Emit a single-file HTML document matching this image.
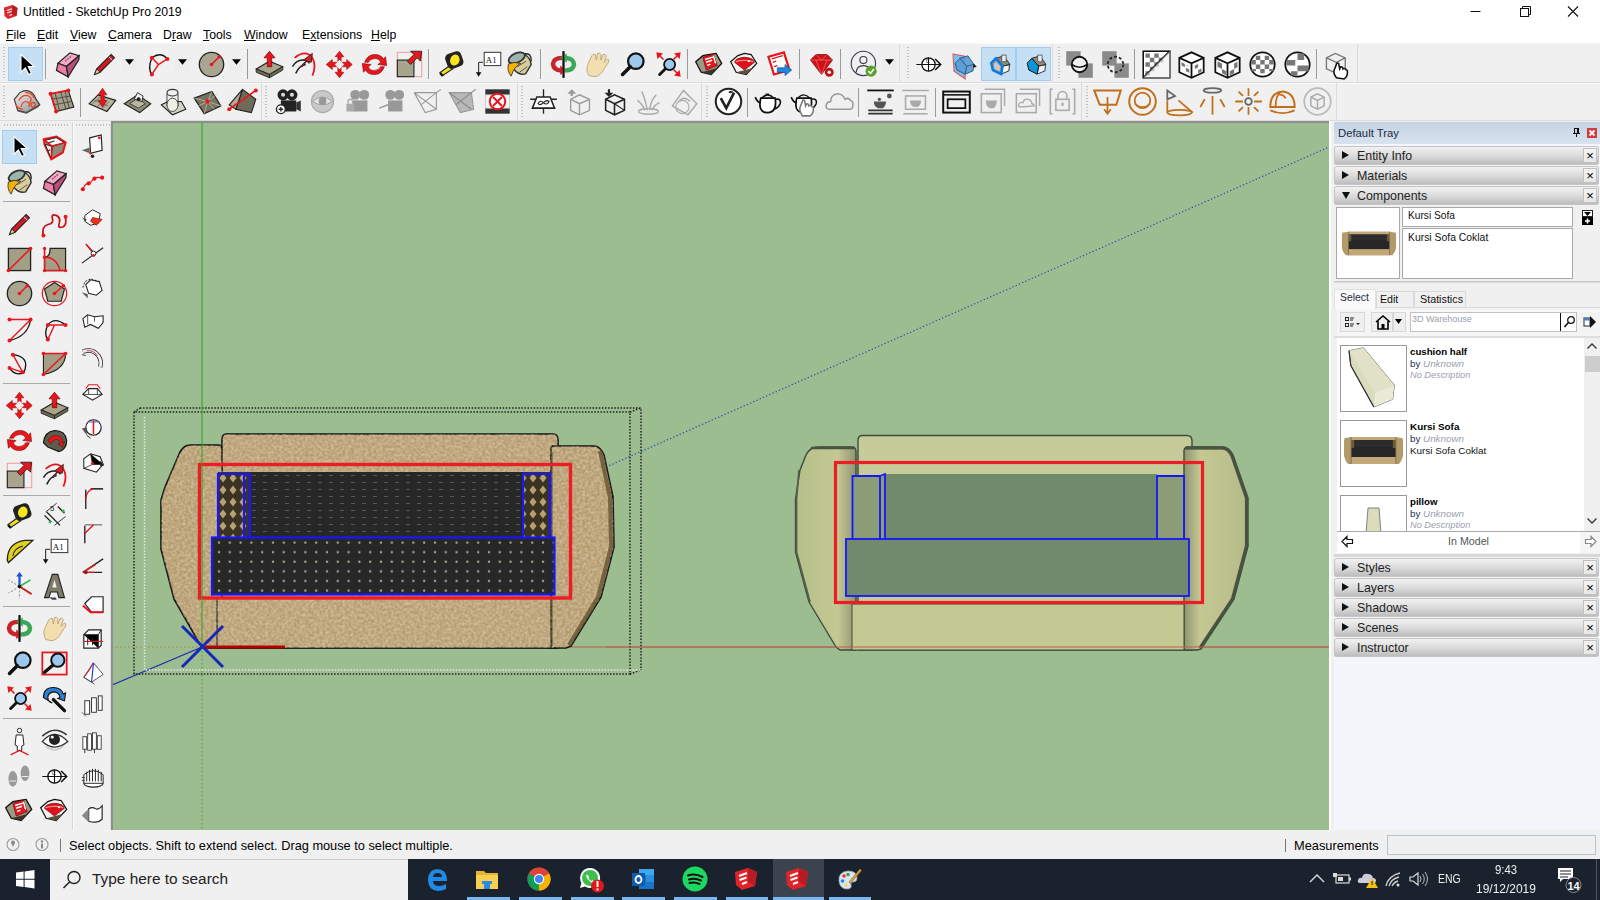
<!DOCTYPE html>
<html><head><meta charset="utf-8">
<style>
*{margin:0;padding:0;box-sizing:border-box}
html,body{width:1600px;height:900px;overflow:hidden;background:#f0f0f0;font-family:"Liberation Sans",sans-serif;position:relative}
.a{position:absolute}
.t{position:absolute;white-space:nowrap;line-height:1}
#title{left:0;top:0;width:1600px;height:43px;background:#fff}
#tb{left:0;top:43px;width:1600px;height:79px;background:#f0f0f0}
#vp{left:113px;top:123px;width:1216px;height:707px;background:#9bbd8f;overflow:hidden}
#status{left:0;top:830px;width:1600px;height:29px;background:#f0f0f0}
#task{left:0;top:859px;width:1600px;height:41px;background:#1a232d}
#tray{left:1334px;top:122px;width:266px;height:710px;background:#f2f5fa}
.hdr{position:absolute;left:1334px;width:265px;height:19px;background:linear-gradient(#f2f2f2,#dcdcdc 50%,#bdbdbd);border:1px solid #c4c4c4;border-radius:2px}
.hdr .tri{position:absolute;left:7px;top:4px;width:0;height:0;border-left:7px solid #111;border-top:4px solid transparent;border-bottom:4px solid transparent}
.hdr .tri.d{left:7px;top:5px;border-top:7px solid #111;border-left:4px solid transparent;border-right:4px solid transparent;border-bottom:0}
.hdr .lbl{position:absolute;left:22px;top:2px;font-size:12.4px;color:#222}
.hdr .x{position:absolute;right:1px;top:1px;width:14px;height:15px;background:linear-gradient(#f4f4f4,#e6e6e6);border:1px solid #c0c0c0;font-size:13px;line-height:14px;text-align:center;color:#000}
</style></head><body>
<div id="title" class="a"></div>
<div id="tb" class="a"></div>
<div id="vp" class="a"></div>
<div class="a" style="left:111px;top:121px;width:1218px;height:2px;background:#8e8e8e"></div><div class="a" style="left:111px;top:121px;width:2px;height:709px;background:#8e8e8e"></div><div class="a" style="left:1329px;top:121px;width:2px;height:711px;background:#fff"></div><div class="a" style="left:111px;top:830px;width:1220px;height:2px;background:#fff"></div>
<div id="tray" class="a"></div>
<div id="status" class="a"></div>
<div id="task" class="a"></div>
<!--VIEWPORT--><svg class="a" style="left:113px;top:123px" width="1216" height="707" viewBox="113 123 1216 707">
<defs>
<filter id="noise" x="0" y="0" width="100%" height="100%"><feTurbulence type="fractalNoise" baseFrequency="0.35" numOctaves="2" seed="5"/><feColorMatrix values="0 0 0 0 0.85  0 0 0 0 0.76  0 0 0 0 0.58  0.9 0 0 0 -0.25"/><feComposite in2="SourceGraphic" operator="in"/></filter>
<pattern id="dots" x="214" y="538" width="10.8" height="9.6" patternUnits="userSpaceOnUse"><rect width="10.8" height="9.6" fill="#272727"/><circle cx="5" cy="4.5" r="1.15" fill="#b0a890"/></pattern>
<pattern id="dash" x="250" y="472" width="11" height="7" patternUnits="userSpaceOnUse"><rect width="11" height="7" fill="#272727"/><rect x="2" y="3" width="4" height="1" fill="#5a5852"/></pattern>
<pattern id="diam" x="218" y="472" width="10" height="12" patternUnits="userSpaceOnUse"><rect width="10" height="12" fill="#3a3222"/><path d="M5 1.5L8.5 6 5 10.5 1.5 6z" fill="#b8a070"/></pattern>
<linearGradient id="armL" x1="0" x2="1"><stop offset="0" stop-color="#b5c089"/><stop offset="0.7" stop-color="#c4c893"/><stop offset="1" stop-color="#8f9470"/></linearGradient>
<linearGradient id="armR" x1="0" x2="1"><stop offset="0" stop-color="#8f9470"/><stop offset="0.25" stop-color="#c4c893"/><stop offset="1" stop-color="#b5bb88"/></linearGradient>
</defs>
<!-- axes -->
<line x1="202" y1="647" x2="202" y2="830" stroke="#2fa82f" stroke-width="1" stroke-dasharray="1.5 2.5"/>
<line x1="112" y1="647" x2="202" y2="647" stroke="#c8704a" stroke-width="1" stroke-dasharray="1.5 2.5"/>
<line x1="202" y1="647" x2="1329" y2="647" stroke="#b8604a" stroke-width="1"/>
<line x1="202" y1="647" x2="112" y2="685" stroke="#1a2ab0" stroke-width="1.2"/>
<line x1="606" y1="467" x2="1329" y2="147" stroke="#2a3ac0" stroke-width="1.1" stroke-dasharray="1.3 2.2"/>
<!-- bounding box dotted -->
<g fill="none" stroke-width="1.5" stroke-dasharray="1.5 1.6">
<path d="M134 674V412H630V674Z" stroke="#222"/>
<path d="M140 408H641V670M134 412L140 408M630 412L641 408M630 674L641 670" stroke="#222"/>
<path d="M144.5 417V670H641" stroke="#e8e8e8"/>
</g>
<!-- LEFT SOFA -->
<g stroke="#111" stroke-width="1.6" stroke-linejoin="round">
<path d="M226 434H553Q558 434 558 440V648H222V440Q222 434 226 434Z" fill="#b59b70"/>
<path d="M190 445H218Q222 445 222 449V648H204L201 646L174 599L161 549V500L165 487L180 452Q184 445 190 445Z" fill="#b3996c"/>
<path d="M553 446H594Q600 446 604 455L613 497L614 547L601 597L571 646L566 648H551V450Q551 446 553 446Z" fill="#b3996c"/>
<path d="M217 598H551V648H217Z" fill="#b59b70" stroke-width="1.2"/>
</g>
<clipPath id="clipL"><path d="M226 434H553Q558 434 558 440V648H222V440Q222 434 226 434Z"/><path d="M190 445H218Q222 445 222 449V648H204L201 646L174 599L161 549V500L165 487L180 452Q184 445 190 445Z"/><path d="M553 446H594Q600 446 604 455L613 497L614 547L601 597L571 646L566 648H551V450Q551 446 553 446Z"/></clipPath><g clip-path="url(#clipL)" filter="url(#noise)"><rect x="160" y="433" width="456" height="216" fill="#fff"/></g>
<path d="M552 452V646" stroke="#5a4a30" stroke-width="2" fill="none" opacity="0.5"/>
<path d="M600 451L610 497 611 547 598 597 569 645" stroke="#5e4c2c" stroke-width="4" fill="none" opacity="0.75"/>
<rect x="250" y="472" width="273" height="65" fill="url(#dash)"/>
<rect x="218" y="472" width="32" height="65" fill="url(#diam)"/>
<rect x="523" y="472" width="27" height="65" fill="url(#diam)"/>
<rect x="212" y="537" width="343" height="58" fill="url(#dots)"/>
<g fill="none" stroke="#1616ff" stroke-width="2.2">
<path d="M218 537V474H250V537M244 474V537"/>
<path d="M523 537V474H550V537"/>
<rect x="212" y="537.5" width="342.5" height="57"/>
</g>
<rect x="199.5" y="464.5" width="371" height="133.5" fill="none" stroke="#ee1c24" stroke-width="3.4"/>
<!-- origin marker -->
<line x1="202" y1="122" x2="202" y2="646" stroke="#22a822" stroke-width="1"/>
<line x1="202" y1="647" x2="285" y2="647" stroke="#b00000" stroke-width="3"/>
<path d="M182 626L223 667M223 626L182 667" stroke="#1528b8" stroke-width="3"/>
<!-- RIGHT SOFA -->
<g stroke="#3f4a3c" stroke-width="1.4" stroke-linejoin="round">
<path d="M862 435.5H1187Q1192 435.5 1192 441V650H858V441Q858 435.5 862 435.5Z" fill="#c6cc99"/>
<path d="M818 447H852Q856 447 856 452V650H840L836 647L809 602L795.5 552V499L800 470L806 455Q810 447 818 447Z" fill="url(#armL)"/>
<path d="M1188 447H1222Q1229 447 1233 455L1248 498V546L1234 599L1201 649L1197 650H1184V451Q1184 447 1188 447Z" fill="url(#armR)" stroke="#3f4a3c" stroke-width="1.4"/>
<path d="M852 604H1184V650H852Z" fill="#c4c994" stroke-width="1"/>
</g>
<path d="M1186 448H1222Q1228 448 1232 456L1246.5 498V546L1232.5 599L1200 648" fill="none" stroke="#4a5242" stroke-width="3.2"/><path d="M811 448H854" stroke="#4a5242" stroke-width="2.5"/><path d="M1185 448H1226" stroke="#4a5242" stroke-width="2.5"/><path d="M799 470L796.5 499V552L810 602" fill="none" stroke="#56604c" stroke-width="1.8"/><rect x="885" y="474" width="272" height="65" fill="#728a6c"/>
<rect x="852" y="475" width="33" height="64" fill="#8c9c76"/>
<rect x="1157" y="476" width="27" height="63" fill="#8c9c76"/>
<rect x="846" y="539" width="343" height="57" fill="#728a6c"/>
<g fill="none" stroke="#1616ff" stroke-width="1.8">
<path d="M852.5 539V476H880V539M880 476L885 474V539"/>
<path d="M1157 539V476H1184V539"/>
<rect x="846" y="539" width="343" height="57"/>
</g>
<rect x="835.5" y="462.5" width="367" height="140" fill="none" stroke="#ee1c24" stroke-width="3.2"/>
<line x1="606" y1="647" x2="1329" y2="647" stroke="#b8604a" stroke-width="1"/>
</svg>
<!--/VIEWPORT-->



<!-- TITLE -->
<svg class="a" style="left:3px;top:4px" width="15" height="16"><path d="M1 3.5L9.5 1 14.5 4 13.5 12 5 15 1.5 12z" fill="#e0262b"/><path d="M9.5 1L14.5 4 13.5 12 9 10z" fill="#b81c20"/><path d="M4 6.5l5-1.8M4.2 9l4.5-1.7M6.5 11.5l2.5-1" stroke="#fff" stroke-width="1.2"/></svg>
<div class="t" style="left:23px;top:6px;font-size:12.25px;color:#000">Untitled - SketchUp Pro 2019</div>
<svg class="a" style="left:1470px;top:6px" width="120" height="12"><path d="M0.5 5.5h10" stroke="#111"/><rect x="50.5" y="2.5" width="8" height="8" fill="none" stroke="#111"/><path d="M52.5 2.5v-2h8v8h-2" fill="none" stroke="#111"/><path d="M98 0.5l10 10M108 0.5l-10 10" stroke="#111" stroke-width="1.1"/></svg>
<!-- MENU -->
<div class="t" style="left:6px;top:29px;font-size:12.3px;color:#000"><u>F</u>ile</div>
<div class="t" style="left:37px;top:29px;font-size:12.3px;color:#000"><u>E</u>dit</div>
<div class="t" style="left:70px;top:29px;font-size:12.3px;color:#000"><u>V</u>iew</div>
<div class="t" style="left:108px;top:29px;font-size:12.3px;color:#000"><u>C</u>amera</div>
<div class="t" style="left:163px;top:29px;font-size:12.3px;color:#000">D<u>r</u>aw</div>
<div class="t" style="left:203px;top:29px;font-size:12.3px;color:#000"><u>T</u>ools</div>
<div class="t" style="left:244px;top:29px;font-size:12.3px;color:#000"><u>W</u>indow</div>
<div class="t" style="left:302px;top:29px;font-size:12.3px;color:#000">E<u>x</u>tensions</div>
<div class="t" style="left:371px;top:29px;font-size:12.3px;color:#000"><u>H</u>elp</div>
<!-- STATUS -->
<div class="t" style="left:69px;top:840px;font-size:12.77px;color:#000">Select objects. Shift to extend select. Drag mouse to select multiple.</div>
<svg class="a" style="left:6px;top:837px" width="46" height="16"><circle cx="7" cy="7.5" r="6" fill="none" stroke="#a0a0a0" stroke-width="1.2"/><path d="M5 5.5a2 2 0 0 1 4 0c0 1.5-2 3-2 5-0-2-2-3.5-2-5z" fill="#888"/><circle cx="36" cy="7.5" r="6" fill="none" stroke="#a0a0a0" stroke-width="1.2"/><circle cx="36" cy="4.5" r="1.2" fill="#888"/><path d="M35 6.5h2v5h-2z" fill="#888"/></svg>
<div class="a" style="left:60px;top:839px;width:1px;height:13px;background:#777"></div>
<div class="a" style="left:1285px;top:839px;width:1px;height:13px;background:#777"></div>
<div class="t" style="left:1294px;top:840px;font-size:12.8px;color:#000">Measurements</div>
<div class="a" style="left:1387px;top:835px;width:209px;height:20px;background:#f0f0f0;border:1px solid #b9c3cf"></div>


















<!--ICONS-->
<div class="a" style="left:0px;top:43px;width:1600px;height:1px;background:#f8f8f8"></div>
<div class="a" style="left:0px;top:82px;width:1600px;height:1px;background:#dcdcdc"></div>
<div class="a" style="left:0px;top:83px;width:1600px;height:1px;background:#fafafa"></div>
<div class="a" style="left:0px;top:120px;width:1600px;height:1px;background:#dcdcdc"></div>
<div class="a" style="left:899px;top:44px;width:1px;height:38px;background:#dcdcdc"></div>
<div class="a" style="left:1052px;top:44px;width:1px;height:38px;background:#dcdcdc"></div>
<div class="a" style="left:1357px;top:44px;width:1px;height:38px;background:#dcdcdc"></div>
<div class="a" style="left:261px;top:83px;width:1px;height:38px;background:#dcdcdc"></div>
<div class="a" style="left:517px;top:83px;width:1px;height:38px;background:#dcdcdc"></div>
<div class="a" style="left:701px;top:83px;width:1px;height:38px;background:#dcdcdc"></div>
<div class="a" style="left:1081px;top:83px;width:1px;height:38px;background:#dcdcdc"></div>
<div class="a" style="left:1336px;top:83px;width:1px;height:38px;background:#dcdcdc"></div>
<div class="a" style="left:3px;top:47px;width:2px;height:33px;background:repeating-linear-gradient(#c2c2c2 0 1px,transparent 1px 3px)"></div>
<div class="a" style="left:907px;top:47px;width:2px;height:33px;background:repeating-linear-gradient(#c2c2c2 0 1px,transparent 1px 3px)"></div>
<div class="a" style="left:1058px;top:47px;width:2px;height:33px;background:repeating-linear-gradient(#c2c2c2 0 1px,transparent 1px 3px)"></div>
<div class="a" style="left:3px;top:86px;width:2px;height:33px;background:repeating-linear-gradient(#c2c2c2 0 1px,transparent 1px 3px)"></div>
<div class="a" style="left:265px;top:86px;width:2px;height:33px;background:repeating-linear-gradient(#c2c2c2 0 1px,transparent 1px 3px)"></div>
<div class="a" style="left:521px;top:86px;width:2px;height:33px;background:repeating-linear-gradient(#c2c2c2 0 1px,transparent 1px 3px)"></div>
<div class="a" style="left:706px;top:86px;width:2px;height:33px;background:repeating-linear-gradient(#c2c2c2 0 1px,transparent 1px 3px)"></div>
<div class="a" style="left:1086px;top:86px;width:2px;height:33px;background:repeating-linear-gradient(#c2c2c2 0 1px,transparent 1px 3px)"></div>
<div class="a" style="left:8px;top:47px;width:35px;height:34px;background:#c5dff5;border:1px solid #9fcdf3"></div>
<div class="a" style="left:981px;top:47px;width:35px;height:34px;background:#c5dff5;border:1px solid #9fcdf3"></div>
<div class="a" style="left:1016px;top:47px;width:35px;height:34px;background:#c5dff5;border:1px solid #9fcdf3"></div>
<div class="a" style="left:45px;top:49px;width:1px;height:30px;background:#9a9a9a"></div>
<div class="a" style="left:247px;top:49px;width:1px;height:30px;background:#9a9a9a"></div>
<div class="a" style="left:428px;top:49px;width:1px;height:30px;background:#9a9a9a"></div>
<div class="a" style="left:540px;top:49px;width:1px;height:30px;background:#9a9a9a"></div>
<div class="a" style="left:687px;top:49px;width:1px;height:30px;background:#9a9a9a"></div>
<div class="a" style="left:799px;top:49px;width:1px;height:30px;background:#9a9a9a"></div>
<div class="a" style="left:840px;top:49px;width:1px;height:30px;background:#9a9a9a"></div>
<div class="a" style="left:1134px;top:49px;width:1px;height:30px;background:#9a9a9a"></div>
<div class="a" style="left:1316px;top:49px;width:1px;height:30px;background:#9a9a9a"></div>
<div class="a" style="left:80px;top:88px;width:1px;height:29px;background:#9a9a9a"></div>
<div class="a" style="left:747px;top:88px;width:1px;height:29px;background:#9a9a9a"></div>
<div class="a" style="left:858px;top:88px;width:1px;height:29px;background:#9a9a9a"></div>
<div class="a" style="left:935px;top:88px;width:1px;height:29px;background:#9a9a9a"></div>
<svg class="a" style="left:10.5px;top:48.5px" width="31" height="31" viewBox="0 0 28 28"><path d="M9 5v16l4-4 3 6 2.5-1.2-3-6h5.5z" fill="#000" stroke="#fff" stroke-width="1"/></svg>
<svg class="a" style="left:51.5px;top:48.5px" width="31" height="31" viewBox="0 0 28 28"><path d="M5.4 12.9L16.2 3.5 24.5 6.1 13 15.8z" fill="#f7a8c8" stroke="#222" stroke-width="1.1"/><path d="M5.4 12.9L13 15.8 14.6 25.1 4 19.3z" fill="#ef7fa6" stroke="#222" stroke-width="1.1"/><path d="M13 15.8L24.5 6.1 24.3 9.5 14.6 25.1z" fill="#b85078" stroke="#222" stroke-width="1.1"/><path d="M12 11l6-5" stroke="#7a5060" stroke-width="1.2" stroke-dasharray="1.5 1"/></svg>
<svg class="a" style="left:88.5px;top:48.5px" width="31" height="31" viewBox="0 0 28 28"><path d="M5 23l2-5 13-13 3 3-13 13z" fill="#d41a1f" stroke="#222" stroke-width="1"/><path d="M5 23l2-5 3 3z" fill="#e8d09a" stroke="#222" stroke-width="0.8"/><path d="M18 7l3 3" stroke="#fff" stroke-width="0.8"/></svg>
<div class="a" style="left:122px;top:58px;width:14px;height:13px;background:#ededed"></div>
<svg class="a" style="left:113.5px;top:46.5px" width="31" height="31" viewBox="0 0 28 28"><path d="M10 11h8l-4 5z" fill="#000"/></svg>
<svg class="a" style="left:142.5px;top:48.5px" width="31" height="31" viewBox="0 0 28 28"><path d="M8 8Q4 18 8 23" fill="none" stroke="#111" stroke-width="1.2"/><path d="M8 8Q16 2 22 9" fill="none" stroke="#111" stroke-width="1.2"/><path d="M8 8L14 14 22 9M14 14L8 23" stroke="#e8161c" stroke-width="1.3" fill="none"/><circle cx="8" cy="8" r="1.8" fill="#e8161c"/><circle cx="22" cy="9" r="1.8" fill="#e8161c"/><circle cx="8" cy="23" r="1.8" fill="#e8161c"/></svg>
<div class="a" style="left:175px;top:58px;width:14px;height:13px;background:#ededed"></div>
<svg class="a" style="left:166.5px;top:46.5px" width="31" height="31" viewBox="0 0 28 28"><path d="M10 11h8l-4 5z" fill="#000"/></svg>
<svg class="a" style="left:195.5px;top:48.5px" width="31" height="31" viewBox="0 0 28 28"><circle cx="14" cy="14" r="11" fill="#a9a590" stroke="#222" stroke-width="1.2"/><path d="M14 14L21 7" stroke="#e8161c" stroke-width="1.4"/><circle cx="14" cy="14" r="1.6" fill="#e8161c"/><circle cx="21" cy="7" r="1.6" fill="#e8161c"/></svg>
<div class="a" style="left:229px;top:58px;width:14px;height:13px;background:#ededed"></div>
<svg class="a" style="left:220.5px;top:46.5px" width="31" height="31" viewBox="0 0 28 28"><path d="M10 11h8l-4 5z" fill="#000"/></svg>
<svg class="a" style="left:253.5px;top:48.5px" width="31" height="31" viewBox="0 0 28 28"><path d="M2 18l12-7 12 5-12 7z" fill="#a9a48a" stroke="#222"/><path d="M2 18l12 5v3l-12-5zM14 23l12-7v3l-12 7z" fill="#6c6956" stroke="#222" stroke-width="0.8"/><path d="M14 2l-5 6h3v8h4v-8h3z" fill="#e8161c" stroke="#600" stroke-width="0.6"/></svg>
<svg class="a" style="left:287.5px;top:48.5px" width="31" height="31" viewBox="0 0 28 28"><path d="M6 8Q16 0 22 8Q26 15 22 24" fill="none" stroke="#e8161c" stroke-width="1.6"/><path d="M4 16Q8 9 15 10M7 22Q10 15 16 14" fill="none" stroke="#222" stroke-width="1.4"/><path d="M12 15l8-8-1 6-2-2-4 5z" fill="#e8161c" stroke="#222" stroke-width="0.8"/><path d="M22 4l-1 8-7-2z" fill="#e8161c" stroke="#222" stroke-width="0.8"/></svg>
<svg class="a" style="left:323.5px;top:48.5px" width="31" height="31" viewBox="0 0 28 28"><path d="M14 2l4 5h-2.5v5h5V9.5l5 4.5-5 4.5V16h-5v5H18l-4 5-4-5h2.5v-5h-5v2.5L2 14l5.5-4.5V12h5V7H10z" fill="#e8161c" stroke="#900" stroke-width="0.5"/><rect x="11" y="11" width="6" height="6" fill="#eee" transform="rotate(45 14 14)"/></svg>
<svg class="a" style="left:358.5px;top:48.5px" width="31" height="31" viewBox="0 0 28 28"><path d="M5 12Q8 4 16 5Q21 6 22 9l2-2 1 8-8-1 2.5-2Q19 9 15 8.5Q10 8.5 8.5 12z" fill="#e8161c" stroke="#700" stroke-width="0.5"/><path d="M23 16Q20 24 12 23Q7 22 6 19l-2 2-1-8 8 1-2.5 2Q9 19 13 19.5Q18 19.5 19.5 16z" fill="#e8161c" stroke="#700" stroke-width="0.5"/></svg>
<svg class="a" style="left:393.5px;top:48.5px" width="31" height="31" viewBox="0 0 28 28"><rect x="3" y="3" width="22" height="22" fill="none" stroke="#f4a0a0" stroke-width="1"/><rect x="3" y="10" width="15" height="15" fill="#a9a58c" stroke="#222" stroke-width="1"/><path d="M25 2l-1 9-3-3-6 6-3-3 6-6-3-3z" fill="#e8161c" stroke="#222" stroke-width="0.8"/></svg>
<svg class="a" style="left:435.5px;top:48.5px" width="31" height="31" viewBox="0 0 28 28"><path d="M3.5 21.5l9-6.5 2.5 3-9 6z" fill="#f2e41c" stroke="#222" stroke-width="1"/><path d="M3 22.5l2.5 2.5 1.5-1-2.5-3z" fill="#111"/><rect x="9" y="3" width="15" height="14" rx="4" transform="rotate(-20 16.5 10)" fill="#222"/><ellipse cx="17" cy="10" rx="4.2" ry="5" transform="rotate(20 17 10)" fill="#f5e620"/></svg>
<svg class="a" style="left:471.5px;top:48.5px" width="31" height="31" viewBox="0 0 28 28"><rect x="11" y="3" width="15" height="12" fill="#fff" stroke="#333" stroke-width="0.9"/><text x="12.5" y="12.5" font-size="8" font-family="Liberation Serif" fill="#111">A1</text><path d="M10 12H6v10" fill="none" stroke="#222" stroke-width="0.9"/><path d="M3.5 21h5L6 25z" fill="#111"/></svg>
<svg class="a" style="left:503.5px;top:48.5px" width="31" height="31" viewBox="0 0 28 28"><path d="M18 4.5Q25 3 24.5 11" fill="none" stroke="#222" stroke-width="1.2"/><path d="M4.5 11L18 4.5Q24 8 24.5 14L19.5 22.5Q14 24 9.5 19z" fill="#d9cd9b" stroke="#333" stroke-width="1.3"/><path d="M12 16l8-5M14 21l7-5" stroke="#555" stroke-width="0.9"/><ellipse cx="11.5" cy="8" rx="7.8" ry="4.2" transform="rotate(-25 11.5 8)" fill="#9db4ae" stroke="#333" stroke-width="1.6"/><path d="M4 13.5Q9 11 15 13Q9 16 6.5 24.5Q2.5 20 4 13.5z" fill="#f6b300" stroke="#333" stroke-width="0.8"/></svg>
<svg class="a" style="left:547.5px;top:48.5px" width="31" height="31" viewBox="0 0 28 28"><path d="M14 2v24" stroke="#111" stroke-width="1.8"/><path d="M13 8Q5 8 4.5 13.5Q5 19 12 19.5" fill="none" stroke="#c8232a" stroke-width="4"/><path d="M11 15l6 4.5-6 4z" fill="#c8232a"/><path d="M15 19.5Q23 19.5 23.5 14Q23 8.5 16 8" fill="none" stroke="#3aa657" stroke-width="4"/><path d="M17 12.5l-6-4.5 6-4z" fill="#3aa657"/><path d="M14 2v24" stroke="#111" stroke-width="1.4"/></svg>
<svg class="a" style="left:581.5px;top:48.5px" width="31" height="31" viewBox="0 0 28 28"><path d="M6 24Q3 18 6 12L9 6Q10 4 12 5L13 10 14 4Q16 3 17 5L17 10 19 5Q21 4 22 6L20 12 23 9Q25 9 24 12L20 18Q17 24 12 25z" fill="#f3deb0" stroke="#b6a27a" stroke-width="0.8"/></svg>
<svg class="a" style="left:616.5px;top:48.5px" width="31" height="31" viewBox="0 0 28 28"><circle cx="17" cy="11" r="7" fill="#9cc8ef" stroke="#111" stroke-width="2"/><path d="M12 16L5 23" stroke="#111" stroke-width="3.2" stroke-linecap="round"/></svg>
<svg class="a" style="left:652.5px;top:48.5px" width="31" height="31" viewBox="0 0 28 28"><circle cx="15" cy="14" r="5" fill="#9cc8ef" stroke="#111" stroke-width="1.6"/><path d="M11 18L6 23" stroke="#111" stroke-width="2.6" stroke-linecap="round"/><path d="M3 3l6 1-2 2 3 3-1 1-3-3-2 2zM25 3l-1 6-2-2-3 3-1-1 3-3-2-2zM25 25l-6-1 2-2-3-3 1-1 3 3 2-2z" fill="#e8161c"/></svg>
<svg class="a" style="left:693.5px;top:48.5px" width="31" height="31" viewBox="0 0 28 28"><path d="M1.5 11.5L8 6 13 5 20 4 25 13 15.5 23 6.5 21z" fill="#9c9a86" stroke="#111" stroke-width="1.2"/><path d="M6.5 21L15.5 23 22 17 14.5 19z" fill="#3a3528"/><path d="M8 7.5L17.5 4.5 21 15 11 19z" fill="#e01920" stroke="#700" stroke-width="0.6"/><path d="M10 9.5l7-2.2M10.8 12l5.5-1.8M11.8 14.8l3-1M17.5 6l2 7" stroke="#fff" stroke-width="1.3"/></svg>
<svg class="a" style="left:728.5px;top:48.5px" width="31" height="31" viewBox="0 0 28 28"><path d="M1.5 11.5L8 6 14 4 20 5 25 13 15.5 23 6.5 21z" fill="#f2f2f2" stroke="#111" stroke-width="1.1"/><path d="M6.5 21L15.5 23 22 17 14.5 19z" fill="#5a5040"/><path d="M5 12Q6 8 14 7.5Q22 8 23 12L14 19z" fill="#e0101a" stroke="#600" stroke-width="0.6"/><path d="M6 11.5Q14 9 22 11.5" stroke="#f88" stroke-width="1.2" fill="none"/><circle cx="18" cy="11" r="1" fill="#ffd"/></svg>
<svg class="a" style="left:763.5px;top:48.5px" width="31" height="31" viewBox="0 0 28 28"><path d="M4 7l14-4 5 16-14 4z" fill="#fff" stroke="#e8161c" stroke-width="2"/><path d="M7 9l10-3M8 12l3-1M9 16l3-1" stroke="#e8161c" stroke-width="1.2"/><path d="M12 17h7v-3l6 5-6 5v-3h-7z" fill="#1e88e5" stroke="#0a4a8a" stroke-width="0.6"/></svg>
<svg class="a" style="left:805.5px;top:48.5px" width="31" height="31" viewBox="0 0 28 28"><path d="M4 10l5-5h10l5 5-10 13z" fill="#d01018" stroke="#600" stroke-width="0.6"/><path d="M4 10h20M9 5l5 5 5-5M9 10l5 13 5-13" fill="none" stroke="#f88" stroke-width="0.5"/><circle cx="21" cy="21" r="4" fill="#c01018"/><circle cx="21" cy="21" r="1.6" fill="#f0f0f0"/></svg>
<svg class="a" style="left:848.5px;top:48.5px" width="31" height="31" viewBox="0 0 28 28"><circle cx="13" cy="13" r="11" fill="none" stroke="#3a3a50" stroke-width="1"/><circle cx="13" cy="10" r="3.2" fill="none" stroke="#3a3a50" stroke-width="1"/><path d="M6.5 21Q7 15 13 15Q17 15 19 18" fill="none" stroke="#3a3a50" stroke-width="1"/><circle cx="20" cy="20" r="5" fill="#5aa02c"/><path d="M17.5 20l2 2 3-4" fill="none" stroke="#fff" stroke-width="1.4"/></svg>
<div class="a" style="left:882px;top:58px;width:14px;height:13px;background:#ededed"></div>
<svg class="a" style="left:873.5px;top:46.5px" width="31" height="31" viewBox="0 0 28 28"><path d="M10 11h8l-4 5z" fill="#000"/></svg>
<svg class="a" style="left:912.5px;top:48.5px" width="31" height="31" viewBox="0 0 28 28"><circle cx="14" cy="14" r="6" fill="#fff" stroke="#111" stroke-width="1.2"/><path d="M3 14h22M14 8v12" stroke="#111" stroke-width="1"/><path d="M20 9l5 5-5 5" fill="none" stroke="#111" stroke-width="1.4"/><text x="11.5" y="12.5" font-size="5" fill="#111" font-family="Liberation Sans">C</text></svg>
<svg class="a" style="left:947.5px;top:48.5px" width="31" height="31" viewBox="0 0 28 28"><path d="M4.5 4.5L15 6.5 15.5 27 5.5 20z" fill="#7cc0ec" stroke="#e85060" stroke-width="1"/><path d="M6.5 12.8L10.7 8.4 18 6.2 23.5 14 22.5 19.8 15.5 22.7 8 19z" fill="#5a9cd0" stroke="#1f4f80" stroke-width="0.9" opacity="0.9"/><path d="M10.7 8.4L16.8 15.5 15.5 22.7M16.8 15.5L23.5 14" fill="none" stroke="#1f4f80" stroke-width="0.8"/><path d="M23 13l3 3-3 1z" fill="#111"/></svg>
<svg class="a" style="left:983.5px;top:48.5px" width="31" height="31" viewBox="0 0 28 28"><path d="M10.7 8.4L18 6.2 23.5 14 16.8 15.5z" fill="#8f8c76" stroke="#222" stroke-width="0.8"/><path d="M16 5.5h4v6h-4z" fill="#eee" stroke="#444" stroke-width="0.7"/><path d="M16.8 15.5L23 14.3 22.5 19.8 15.5 22.7z" fill="#f4f4f4" stroke="#222" stroke-width="0.8"/><path d="M6.5 12.8L10.7 8.4 16.8 15.5 15.5 22.7 8 19z" fill="#9a9a9a" stroke="#0a7ae0" stroke-width="2.2"/><path d="M9 13.5L11 11.5 14.5 15.5 14 20 9.5 18z" fill="#c8c8c8"/></svg>
<svg class="a" style="left:1019.5px;top:48.5px" width="31" height="31" viewBox="0 0 28 28"><path d="M10.7 8.4L18 6.2 23.5 14 16.8 15.5z" fill="#8f8c76" stroke="#222" stroke-width="0.8"/><path d="M16 5.5h4v6h-4z" fill="#eee" stroke="#444" stroke-width="0.7"/><path d="M16.8 15.5L23 14.3 22.5 19.8 15.5 22.7z" fill="#f4f4f4" stroke="#222" stroke-width="0.8"/><path d="M6.5 12.8L10.7 8.4 16.8 15.5 15.5 22.7 8 19z" fill="#0a96d8" stroke="#111" stroke-width="0.9"/></svg>
<svg class="a" style="left:1063.5px;top:48.5px" width="31" height="31" viewBox="0 0 28 28"><rect x="2" y="2" width="13" height="13" fill="#8a8a8a"/><rect x="13" y="13" width="13" height="13" fill="#8a8a8a"/><circle cx="14" cy="14" r="7" fill="#f0f0f0" stroke="#111" stroke-width="1.6"/><path d="M7 14Q14 19 21 14" fill="none" stroke="#111" stroke-width="1.4"/></svg>
<svg class="a" style="left:1099.5px;top:48.5px" width="31" height="31" viewBox="0 0 28 28"><rect x="2" y="2" width="13" height="13" fill="#8a8a8a"/><rect x="13" y="13" width="13" height="13" fill="#8a8a8a"/><circle cx="14" cy="14" r="7" fill="none" stroke="#222" stroke-width="1.6" stroke-dasharray="2.5 2"/></svg>
<svg class="a" style="left:1140.5px;top:48.5px" width="31" height="31" viewBox="0 0 28 28"><rect x="2" y="2" width="24" height="24" fill="#fff" stroke="#111" stroke-width="1.4"/><path d="M4 4h4v4H4zM12 4h4v4h-4zM8 8h4v4H8zM16 8h4v4h-4zM4 12h4v4H4zM12 12h4v4h-4zM8 16h4v4H8zM4 20h4v4H4z" fill="#777"/><path d="M2 26L26 2" stroke="#111" stroke-width="1.6"/><path d="M26 2v24H2z" fill="#f0f0f0" opacity="0.6"/></svg>
<svg class="a" style="left:1175.5px;top:48.5px" width="31" height="31" viewBox="0 0 28 28"><path d="M3 8l11-5 11 5v13l-11 5-11-5z" fill="#fff" stroke="#111" stroke-width="1.6"/><path d="M3 8l11 5 11-5M14 13v13" fill="none" stroke="#111" stroke-width="1.6"/><path d="M5 12l3 1.5v3l-3-1.5zM9 17l3 1.5v3l-3-1.5zM17 15l3-1.5v3l-3 1.5zM20 19l3-1.5v3l-3 1.5zM8 14l3 1.5v-0.5z" fill="#777"/></svg>
<svg class="a" style="left:1211.5px;top:48.5px" width="31" height="31" viewBox="0 0 28 28"><path d="M3 8l11-5 11 5v13l-11 5-11-5z" fill="#fff" stroke="#111" stroke-width="1.6"/><path d="M3 8l11 5 11-5M14 13v13" fill="none" stroke="#111" stroke-width="1.6"/><path d="M5 11l4 2v5l-4-2zM9 18l4 2v4l-4-2zM16 20l4-2v4l-4 2zM20 13l3-1.5v5l-3 1.5z" fill="#777"/></svg>
<svg class="a" style="left:1246.5px;top:48.5px" width="31" height="31" viewBox="0 0 28 28"><circle cx="14" cy="14" r="11" fill="#fff" stroke="#111" stroke-width="1.6"/><path d="M8 6h4v4H8zM16 6h4v4h-4zM4 10h4v4H4zM12 10h4v4h-4zM20 10h4v4h-4zM8 14h4v4H8zM16 14h4v4h-4zM12 18h4v4h-4zM4 18h4v2H4zM20 18h4v2h-4z" fill="#777"/></svg>
<svg class="a" style="left:1281.5px;top:48.5px" width="31" height="31" viewBox="0 0 28 28"><circle cx="14" cy="14" r="11" fill="#fff" stroke="#111" stroke-width="1.6"/><path d="M4 10h8v5H4zM14 15h10v5H14zM14 4h6v6h-6zM8 20h6v4H8z" fill="#777"/></svg>
<svg class="a" style="left:1321.5px;top:48.5px" width="31" height="31" viewBox="0 0 28 28"><path d="M4 8l8-4 9 4v10l-8 4-9-4z" fill="none" stroke="#777" stroke-width="1.2"/><path d="M4 8l9 4 8-4M13 12v10" fill="none" stroke="#777" stroke-width="1.2"/><path d="M13 26Q10 22 11 19L13 14Q13 12 15 13L16 18 17 16Q19 16 19 18Q21 17 22 19Q23 19 23 21Q23 25 20 27z" fill="#fff" stroke="#111" stroke-width="1.4"/></svg>
<svg class="a" style="left:10.5px;top:85.5px" width="31" height="31" viewBox="0 0 28 28"><defs><linearGradient id="gct" x1="0" x2="1" y1="0" y2="1"><stop offset="0" stop-color="#f4f4f4"/><stop offset="1" stop-color="#8a8a8a"/></linearGradient></defs><path d="M3 12L8 6Q13 3 17 5Q21 7 22 11L26 17 14 24 6 22z" fill="url(#gct)" stroke="#333" stroke-width="1"/><path d="M6 22L14 24 26 17 25 19 14 25 6 23z" fill="#555"/><path d="M7 13Q11 7 16 9Q20 11 17 15M9 19Q10 14 14 14Q18 15 16 19M13 6Q19 6 21 11M18 17a2 2 0 1 0 4 0a2 2 0 1 0-4 0M4 16Q6 21 11 21" fill="none" stroke="#e8401c" stroke-width="1.1"/></svg>
<svg class="a" style="left:44.5px;top:85.5px" width="31" height="31" viewBox="0 0 28 28"><path d="M5 7l16-3 5 15-16 4z" fill="#a39f86" stroke="#222" stroke-width="1"/><path d="M9 6l4 16M14 5l5 16M18 4.5l4 15.5M6 12l17-3M8 17l16-3" stroke="#444" stroke-width="0.8"/><path d="M5 7l16-3M5 7l5 16" stroke="#e8161c" stroke-width="1.5"/><circle cx="5" cy="7" r="1.8" fill="#e8161c"/><circle cx="21" cy="4" r="1.8" fill="#e8161c"/><circle cx="10" cy="23" r="1.8" fill="#e8161c"/></svg>
<svg class="a" style="left:86.5px;top:85.5px" width="31" height="31" viewBox="0 0 28 28"><path d="M2 16l8-8 16 5-8 10z" fill="#b7b39c" stroke="#222" stroke-width="1"/><path d="M5 16l7-6M9 19l8-8M13 21l7-7M5 12l14 6" stroke="#555" stroke-width="0.6"/><path d="M14 2l-4 6h2.5v5l-2.5 0 4 6 4-6h-2.5v-5H18z" fill="#e8161c" stroke="#700" stroke-width="0.5"/></svg>
<svg class="a" style="left:121.5px;top:85.5px" width="31" height="31" viewBox="0 0 28 28"><path d="M2 16l12-8 12 8-10 8z" fill="#8f8b76" stroke="#222" stroke-width="1"/><path d="M7 16l7-5 7 5-6 4z" fill="#b9b5a0" stroke="#333" stroke-width="0.8"/><path d="M11 12l3-6 5 3-1 5z" fill="#f0f0f0" stroke="#222" stroke-width="0.8"/><circle cx="15" cy="12" r="1.8" fill="#222"/></svg>
<svg class="a" style="left:156.5px;top:85.5px" width="31" height="31" viewBox="0 0 28 28"><ellipse cx="14" cy="6" rx="5" ry="3" fill="none" stroke="#333" stroke-width="1"/><path d="M4 17l6-3 12 0 4 7-12 5z" fill="#d6d5c4" stroke="#222" stroke-width="1"/><path d="M9 7v11M19 7v11" stroke="#333" stroke-width="0.8"/><ellipse cx="14" cy="17" rx="5" ry="6" fill="#f0f0e8" stroke="#333" stroke-width="0.8"/></svg>
<svg class="a" style="left:191.5px;top:85.5px" width="31" height="31" viewBox="0 0 28 28"><path d="M2 11l16-6 8 13-15 7z" fill="#77735f" stroke="#222" stroke-width="1.1"/><path d="M2 11l12 3 12 4M18 5l-4 9-3 11M14 14l9-7M6 18l8-4 6 7" stroke="#c8c8c0" stroke-width="0.6" fill="none"/><circle cx="14" cy="14" r="2" fill="#e8161c"/></svg>
<svg class="a" style="left:226.5px;top:85.5px" width="31" height="31" viewBox="0 0 28 28"><path d="M14 3l12 9-4 12-14-3z" fill="#6f6b58" stroke="#222" stroke-width="1"/><path d="M14 3L8 21 2 17z" fill="#b0ac95" stroke="#222" stroke-width="1"/><path d="M2 21l24-17" stroke="#e8161c" stroke-width="1.4"/><circle cx="2" cy="21" r="1.8" fill="#e8161c"/><circle cx="26" cy="4" r="1.8" fill="#e8161c"/></svg>
<svg class="a" style="left:271.5px;top:85.5px" width="31" height="31" viewBox="0 0 28 28"><circle cx="10" cy="8" r="5" fill="#222"/><circle cx="18" cy="8" r="5" fill="#222"/><circle cx="10" cy="8" r="1.8" fill="#ddd"/><circle cx="18" cy="8" r="1.8" fill="#ddd"/><rect x="8" y="13" width="14" height="10" fill="#222"/><path d="M22 15l4-2v10l-4-2z" fill="#333"/><circle cx="8" cy="21" r="4" fill="#fff" stroke="#222" stroke-width="1.2"/><path d="M6 21h4M8 19v4" stroke="#222" stroke-width="1.2"/></svg>
<svg class="a" style="left:306.5px;top:85.5px" width="31" height="31" viewBox="0 0 28 28"><circle cx="14" cy="14" r="10" fill="#c8c8c8" stroke="#aaa" stroke-width="1"/><path d="M5 14Q14 6 23 14Q14 20 5 14z" fill="#e4e4e4" stroke="#999" stroke-width="0.8"/><circle cx="14" cy="13.5" r="3.5" fill="#999"/></svg>
<svg class="a" style="left:341.5px;top:85.5px" width="31" height="31" viewBox="0 0 28 28"><circle cx="12" cy="8" r="4.5" fill="#999"/><circle cx="20" cy="8" r="4.5" fill="#999"/><rect x="10" y="13" width="13" height="10" fill="#999"/><rect x="4" y="16" width="7" height="7" fill="#aaa"/><path d="M5.5 16v-2a2 2 0 0 1 4 0v2" fill="none" stroke="#aaa" stroke-width="1.2"/></svg>
<svg class="a" style="left:376.5px;top:85.5px" width="31" height="31" viewBox="0 0 28 28"><circle cx="12" cy="8" r="4.5" fill="#999"/><circle cx="20" cy="8" r="4.5" fill="#999"/><rect x="10" y="13" width="13" height="10" fill="#999"/><path d="M2 20l8-3" stroke="#999" stroke-width="1.4"/></svg>
<svg class="a" style="left:411.5px;top:85.5px" width="31" height="31" viewBox="0 0 28 28"><path d="M2 6h20l4-3M2 6l10 18 10-3 0-15M2 6l20 15M22 6L8 17" fill="none" stroke="#999" stroke-width="1"/></svg>
<svg class="a" style="left:446.5px;top:85.5px" width="31" height="31" viewBox="0 0 28 28"><path d="M2 6h20l2 15-12 3z" fill="#b8b8b8" stroke="#999" stroke-width="1"/><path d="M22 6l4-3M2 6l20 15M22 6L8 17" fill="none" stroke="#888" stroke-width="1"/></svg>
<svg class="a" style="left:481.5px;top:85.5px" width="31" height="31" viewBox="0 0 28 28"><rect x="3" y="3" width="22" height="5" fill="#333"/><rect x="3" y="20" width="22" height="5" fill="#333"/><rect x="3" y="8" width="22" height="12" fill="#f4f4f4" stroke="#bbb" stroke-width="0.6"/><circle cx="14" cy="14" r="7" fill="#fff" stroke="#e8161c" stroke-width="1.8"/><path d="M10 10l8 8M18 10l-8 8" stroke="#e8161c" stroke-width="1.8"/></svg>
<svg class="a" style="left:527.5px;top:85.5px" width="31" height="31" viewBox="0 0 28 28"><path d="M4 20l4-10h12l4 10z" fill="#fff" stroke="#222" stroke-width="1.4"/><path d="M14 3v7M14 20v5M2 12h5M21 12h5" stroke="#222" stroke-width="1.2"/><path d="M9 16Q11 12 14 15Q17 18 19 14Q17 12 14 15Q11 18 9 16z" fill="none" stroke="#222" stroke-width="1"/></svg>
<svg class="a" style="left:563.5px;top:85.5px" width="31" height="31" viewBox="0 0 28 28"><path d="M6 12l8-4 9 4v10l-9 4-8-4z" fill="#f0f0f0" stroke="#999" stroke-width="1.2"/><path d="M6 12l8 4 9-4M14 16v10" fill="none" stroke="#999" stroke-width="1.2"/><path d="M7 3l-4 4h3v2h2V7h3z" fill="#999"/></svg>
<svg class="a" style="left:598.5px;top:85.5px" width="31" height="31" viewBox="0 0 28 28"><path d="M6 12l8-4 9 4v10l-9 4-8-4z" fill="#f0f0f0" stroke="#222" stroke-width="1.4"/><path d="M6 12l8 4 9-4M14 16v10M14 16l9-4" fill="none" stroke="#222" stroke-width="1.4"/><path d="M14 16L23 22" stroke="#222" stroke-width="1"/><path d="M5 6l4 4 4-4h-3V3H8v3z" fill="#222"/></svg>
<svg class="a" style="left:632.5px;top:85.5px" width="31" height="31" viewBox="0 0 28 28"><path d="M13 22Q11 12 8 5M15 22Q16 13 21 8M11 22Q8 16 4 13M17 22Q19 17 24 15" fill="none" stroke="#aaa" stroke-width="1.3"/><ellipse cx="14" cy="23" rx="9" ry="2.5" fill="none" stroke="#aaa" stroke-width="1.2"/></svg>
<svg class="a" style="left:667.5px;top:85.5px" width="31" height="31" viewBox="0 0 28 28"><path d="M4 18L14 4l12 12-8 10z" fill="none" stroke="#aaa" stroke-width="1.3"/><path d="M10 14Q14 8 20 14" fill="none" stroke="#aaa" stroke-width="1.3"/><circle cx="13" cy="19" r="6" fill="none" stroke="#aaa" stroke-width="1"/></svg>
<svg class="a" style="left:712.5px;top:85.5px" width="31" height="31" viewBox="0 0 28 28"><circle cx="14" cy="14" r="11.5" fill="#fff" stroke="#222" stroke-width="1.8"/><path d="M7 11l5 9 7-14" fill="none" stroke="#222" stroke-width="2.4"/><ellipse cx="16" cy="5.5" rx="2" ry="1" fill="#222"/></svg>
<svg class="a" style="left:752.5px;top:85.5px" width="31" height="31" viewBox="0 0 28 28"><path d="M7 11Q4 24 13 24Q22 24 20 11z" fill="#fff" stroke="#111" stroke-width="1.6"/><path d="M7 15Q4 15 2 10" fill="none" stroke="#111" stroke-width="1.6"/><path d="M20 12Q26 11 24.5 16Q23 20 18.5 21" fill="none" stroke="#111" stroke-width="1.5"/><path d="M8 11Q13 5 19 11" fill="none" stroke="#111" stroke-width="1.4"/><path d="M11.5 7.5h3" stroke="#111" stroke-width="1.4"/></svg>
<svg class="a" style="left:788.5px;top:85.5px" width="31" height="31" viewBox="0 0 28 28"><path d="M7 11Q4 24 13 24Q22 24 20 11z" fill="#fff" stroke="#111" stroke-width="1.5"/><path d="M7 15Q4 15 2 10" fill="none" stroke="#111" stroke-width="1.5"/><path d="M20 12Q26 11 24.5 16Q23 20 18.5 21" fill="none" stroke="#111" stroke-width="1.4"/><path d="M8 11Q13 5 19 11" fill="none" stroke="#111" stroke-width="1.3"/><path d="M12 27Q9 22 10 19L12 14Q12 12 14 13L15 18 16 16Q18 16 18 18Q20 17 21 19Q22 19 22 21Q22 25 19 27z" fill="#fff" stroke="#777" stroke-width="1.4"/></svg>
<svg class="a" style="left:823.5px;top:85.5px" width="31" height="31" viewBox="0 0 28 28"><path d="M5 21Q1 21 2 17Q3 14 6 14Q6 8 12 7Q17 7 19 12Q22 10 24 13Q27 14 26 18Q26 21 23 21z" fill="#f0f0f0" stroke="#999" stroke-width="1.4"/></svg>
<svg class="a" style="left:864.5px;top:85.5px" width="31" height="31" viewBox="0 0 28 28"><path d="M2 4h24" stroke="#111" stroke-width="1.6"/><path d="M3 22h22M3 25h22" stroke="#333" stroke-width="1.6"/><path d="M8 14Q8 19 12 20h4Q19 18 19 14z" fill="#555"/><circle cx="13" cy="12" r="1.5" fill="#555"/><circle cx="22" cy="9" r="2.2" fill="#555"/></svg>
<svg class="a" style="left:899.5px;top:85.5px" width="31" height="31" viewBox="0 0 28 28"><path d="M2 4h24M3 25h22" stroke="#aaa" stroke-width="1.4"/><rect x="5" y="9" width="18" height="12" fill="none" stroke="#aaa" stroke-width="1.4"/><path d="M9 13Q9 18 13 19h3Q19 17 19 13z" fill="#aaa"/></svg>
<svg class="a" style="left:940.5px;top:85.5px" width="31" height="31" viewBox="0 0 28 28"><rect x="2" y="5" width="24" height="19" fill="none" stroke="#111" stroke-width="1.8"/><path d="M2 8h24" stroke="#111" stroke-width="1.4"/><rect x="6" y="12" width="16" height="8" fill="none" stroke="#111" stroke-width="1.6"/></svg>
<svg class="a" style="left:977.5px;top:85.5px" width="31" height="31" viewBox="0 0 28 28"><path d="M6 3h18v15" fill="none" stroke="#aaa" stroke-width="1.3"/><rect x="3" y="7" width="18" height="17" fill="#f0f0f0" stroke="#aaa" stroke-width="1.4"/><path d="M7 13Q7 19 11 20h3Q17 18 17 13z" fill="#aaa"/></svg>
<svg class="a" style="left:1012.5px;top:85.5px" width="31" height="31" viewBox="0 0 28 28"><path d="M6 3h18v15" fill="none" stroke="#aaa" stroke-width="1.3"/><rect x="3" y="7" width="18" height="17" fill="#f0f0f0" stroke="#aaa" stroke-width="1.4"/><path d="M7 19Q5 19 5 17Q6 14 9 15Q10 11 14 12Q17 13 17 16Q19 16 19 18z" fill="none" stroke="#aaa" stroke-width="1.2"/></svg>
<svg class="a" style="left:1046.5px;top:85.5px" width="31" height="31" viewBox="0 0 28 28"><path d="M5 3H3v22h2M23 3h2v22h-2" fill="none" stroke="#aaa" stroke-width="1.4"/><rect x="8" y="12" width="12" height="10" fill="none" stroke="#aaa" stroke-width="1.4"/><path d="M10 12V9a4 4 0 0 1 8 0v3" fill="none" stroke="#aaa" stroke-width="1.4"/><rect x="13" y="15" width="2" height="3" fill="#aaa"/></svg>
<svg class="a" style="left:1091.5px;top:85.5px" width="31" height="31" viewBox="0 0 28 28"><path d="M2 4h24l-4 13H7z" fill="none" stroke="#c0701a" stroke-width="1.8"/><path d="M14 10v14M11 21l3 4 3-4" fill="none" stroke="#c0701a" stroke-width="1.6"/></svg>
<svg class="a" style="left:1126.5px;top:85.5px" width="31" height="31" viewBox="0 0 28 28"><circle cx="14" cy="14" r="12" fill="none" stroke="#c0701a" stroke-width="1.8"/><circle cx="14" cy="13" r="7" fill="none" stroke="#c0701a" stroke-width="1.6"/><path d="M7 16Q14 22 21 16" fill="none" stroke="#c0701a" stroke-width="1.4"/></svg>
<svg class="a" style="left:1163.5px;top:85.5px" width="31" height="31" viewBox="0 0 28 28"><path d="M3 4l7 5-7 3z" fill="none" stroke="#666" stroke-width="1.6"/><path d="M3 13v11M13 13l13 11" stroke="#c0701a" stroke-width="1.6"/><ellipse cx="14" cy="24" rx="11" ry="2.5" fill="none" stroke="#c0701a" stroke-width="1.6"/></svg>
<svg class="a" style="left:1196.5px;top:85.5px" width="31" height="31" viewBox="0 0 28 28"><ellipse cx="14" cy="4" rx="8" ry="2" fill="none" stroke="#666" stroke-width="1.6"/><path d="M14 9v17M7 12l-4 7M21 12l4 7" stroke="#c0701a" stroke-width="1.6"/></svg>
<svg class="a" style="left:1232.5px;top:85.5px" width="31" height="31" viewBox="0 0 28 28"><circle cx="14" cy="14" r="3" fill="none" stroke="#666" stroke-width="1.6"/><path d="M14 2v7M14 19v7M2 14h7M19 14h7M5 5l4 4M19 19l4 4M23 5l-4 4M5 23l4-4" stroke="#c0701a" stroke-width="1.6"/></svg>
<svg class="a" style="left:1266.5px;top:85.5px" width="31" height="31" viewBox="0 0 28 28"><path d="M3 19Q3 6 14 5Q25 6 25 19z" fill="none" stroke="#c0701a" stroke-width="1.8"/><path d="M3 22Q14 27 25 22M12 5Q7 11 8 20M17 11Q14 7 11 8" fill="none" stroke="#c0701a" stroke-width="1.6"/></svg>
<svg class="a" style="left:1301.5px;top:85.5px" width="31" height="31" viewBox="0 0 28 28"><circle cx="14" cy="14" r="12" fill="none" stroke="#bbb" stroke-width="1.6"/><path d="M8 10l6-3 6 3v8l-6 3-6-3z" fill="none" stroke="#aaa" stroke-width="1.3"/><path d="M8 10l6 3 6-3M14 13v8" fill="none" stroke="#aaa" stroke-width="1.3"/></svg>
<div class="a" style="left:72px;top:122px;width:1px;height:708px;background:#d8d8d8"></div>
<div class="a" style="left:73px;top:122px;width:1px;height:708px;background:#fafafa"></div>
<div class="a" style="left:110px;top:122px;width:1px;height:708px;background:#e0e0e0"></div>
<div class="a" style="left:4px;top:124px;width:66px;height:2px;background:repeating-linear-gradient(90deg,#c2c2c2 0 1px,transparent 1px 3px)"></div>
<div class="a" style="left:76px;top:124px;width:34px;height:2px;background:repeating-linear-gradient(90deg,#c2c2c2 0 1px,transparent 1px 3px)"></div>
<div class="a" style="left:2px;top:130px;width:35px;height:34px;background:#c5dff5;border:1px solid #9fcdf3"></div>
<div class="a" style="left:3px;top:201px;width:67px;height:1px;background:#a8a8a8"></div>
<div class="a" style="left:3px;top:383px;width:67px;height:1px;background:#a8a8a8"></div>
<div class="a" style="left:3px;top:495px;width:67px;height:1px;background:#a8a8a8"></div>
<div class="a" style="left:3px;top:606px;width:67px;height:1px;background:#a8a8a8"></div>
<div class="a" style="left:3px;top:718px;width:67px;height:1px;background:#a8a8a8"></div>
<svg class="a" style="left:3.5px;top:130.5px" width="31" height="31" viewBox="0 0 28 28"><path d="M9 5v16l4-4 3 6 2.5-1.2-3-6h5.5z" fill="#000" stroke="#fff" stroke-width="1"/></svg>
<svg class="a" style="left:38.5px;top:130.5px" width="31" height="31" viewBox="0 0 28 28"><path d="M4.3 7.5L15.8 5 24.1 10.4 21.5 19.4 11.1 25.5 5 12.2z" fill="#8f8b76" stroke="#e8161c" stroke-width="1.8"/><path d="M5 8.5L15.5 6 23 10.5 12 14z" fill="#fff" stroke="#222" stroke-width="0.9"/><path d="M12 14L11.1 25 5.5 12z" fill="#eee" stroke="#222" stroke-width="0.9"/><path d="M8 11l6-2M8 18l2-1" stroke="#444" stroke-width="1.2"/><path d="M4.3 7.5L11.5 13.5 24.1 10.4M11.5 13.5L11.1 25.5" fill="none" stroke="#e8161c" stroke-width="1.4"/></svg>
<svg class="a" style="left:3.5px;top:166.5px" width="31" height="31" viewBox="0 0 28 28"><path d="M18 4.5Q25 3 24.5 11" fill="none" stroke="#222" stroke-width="1.2"/><path d="M4.5 11L18 4.5Q24 8 24.5 14L19.5 22.5Q14 24 9.5 19z" fill="#d9cd9b" stroke="#333" stroke-width="1.3"/><path d="M12 16l8-5M14 21l7-5" stroke="#555" stroke-width="0.9"/><ellipse cx="11.5" cy="8" rx="7.8" ry="4.2" transform="rotate(-25 11.5 8)" fill="#9db4ae" stroke="#333" stroke-width="1.6"/><path d="M4 13.5Q9 11 15 13Q9 16 6.5 24.5Q2.5 20 4 13.5z" fill="#f6b300" stroke="#333" stroke-width="0.8"/></svg>
<svg class="a" style="left:38.5px;top:166.5px" width="31" height="31" viewBox="0 0 28 28"><path d="M5.4 12.9L16.2 3.5 24.5 6.1 13 15.8z" fill="#f7a8c8" stroke="#222" stroke-width="1.1"/><path d="M5.4 12.9L13 15.8 14.6 25.1 4 19.3z" fill="#ef7fa6" stroke="#222" stroke-width="1.1"/><path d="M13 15.8L24.5 6.1 24.3 9.5 14.6 25.1z" fill="#b85078" stroke="#222" stroke-width="1.1"/><path d="M12 11l6-5" stroke="#7a5060" stroke-width="1.2" stroke-dasharray="1.5 1"/></svg>
<svg class="a" style="left:3.5px;top:208.5px" width="31" height="31" viewBox="0 0 28 28"><path d="M5 23l2-5 13-13 3 3-13 13z" fill="#d41a1f" stroke="#222" stroke-width="1"/><path d="M5 23l2-5 3 3z" fill="#e8d09a" stroke="#222" stroke-width="0.8"/><path d="M18 7l3 3" stroke="#fff" stroke-width="0.8"/></svg>
<svg class="a" style="left:38.5px;top:208.5px" width="31" height="31" viewBox="0 0 28 28"><path d="M4 24Q2 16 8 14Q14 13 12 8Q11 4 16 6Q20 8 18 14Q17 18 22 16Q25 14 24 8" fill="none" stroke="#c81418" stroke-width="1.6"/><circle cx="4" cy="24" r="1.8" fill="#e8161c"/><circle cx="24" cy="7" r="1.8" fill="#e8161c"/></svg>
<svg class="a" style="left:3.5px;top:243.5px" width="31" height="31" viewBox="0 0 28 28"><rect x="4" y="4" width="20" height="20" fill="#a39f86" stroke="#222" stroke-width="1.2"/><path d="M4 24L24 4" stroke="#e8161c" stroke-width="1.4"/><circle cx="4" cy="24" r="1.6" fill="#e8161c"/><circle cx="24" cy="4" r="1.6" fill="#e8161c"/></svg>
<svg class="a" style="left:38.5px;top:243.5px" width="31" height="31" viewBox="0 0 28 28"><path d="M5 4v20h19V4H10Q10 12 5 12" fill="#a39f86" stroke="#222" stroke-width="1.1"/><path d="M5 12Q16 12 19 24M5 4v20h19" fill="none" stroke="#e8161c" stroke-width="1.3"/><circle cx="5" cy="4" r="1.5" fill="#e8161c"/><circle cx="5" cy="12" r="1.5" fill="#e8161c"/><circle cx="5" cy="24" r="1.5" fill="#e8161c"/><circle cx="24" cy="24" r="1.5" fill="#e8161c"/></svg>
<svg class="a" style="left:3.5px;top:278.0px" width="31" height="31" viewBox="0 0 28 28"><circle cx="14" cy="14" r="11" fill="#a9a590" stroke="#222" stroke-width="1.2"/><path d="M14 14L21 7" stroke="#e8161c" stroke-width="1.4"/><circle cx="14" cy="14" r="1.6" fill="#e8161c"/><circle cx="21" cy="7" r="1.6" fill="#e8161c"/></svg>
<svg class="a" style="left:38.5px;top:278.0px" width="31" height="31" viewBox="0 0 28 28"><circle cx="14" cy="14" r="11" fill="none" stroke="#e8161c" stroke-width="1.1"/><path d="M14 4l9 6-3 11H8L5 10z" fill="#a39f86" stroke="#222" stroke-width="1.1"/><path d="M14 14l8-7" stroke="#e8161c" stroke-width="1.3"/><circle cx="14" cy="14" r="1.6" fill="#e8161c"/><circle cx="22" cy="7" r="1.6" fill="#e8161c"/></svg>
<svg class="a" style="left:3.5px;top:313.5px" width="31" height="31" viewBox="0 0 28 28"><path d="M5 5h19M5 24L24 5" stroke="#e8161c" stroke-width="1.3"/><path d="M24 5Q22 20 5 24" fill="none" stroke="#222" stroke-width="1.2"/><circle cx="5" cy="5" r="1.8" fill="#e8161c"/><circle cx="24" cy="5" r="1.8" fill="#e8161c"/><circle cx="5" cy="24" r="1.8" fill="#e8161c"/></svg>
<svg class="a" style="left:38.5px;top:313.5px" width="31" height="31" viewBox="0 0 28 28"><path d="M8 10Q4 18 8 23" fill="none" stroke="#111" stroke-width="1.2"/><path d="M8 10Q14 2 24 10" fill="none" stroke="#111" stroke-width="1.2"/><path d="M8 10h16M14 10L8 23" stroke="#e8161c" stroke-width="1.3" fill="none"/><circle cx="8" cy="10" r="1.8" fill="#e8161c"/><circle cx="24" cy="10" r="1.8" fill="#e8161c"/><circle cx="8" cy="23" r="1.8" fill="#e8161c"/></svg>
<svg class="a" style="left:3.5px;top:347.5px" width="31" height="31" viewBox="0 0 28 28"><path d="M8 6Q24 8 18 22Q10 26 5 18" fill="none" stroke="#111" stroke-width="1.2"/><path d="M8 6L17 22 5 18" stroke="#e8161c" stroke-width="1.3" fill="none"/><circle cx="8" cy="6" r="1.8" fill="#e8161c"/><circle cx="17" cy="22" r="1.8" fill="#e8161c"/><circle cx="5" cy="18" r="1.8" fill="#e8161c"/></svg>
<svg class="a" style="left:38.5px;top:347.5px" width="31" height="31" viewBox="0 0 28 28"><path d="M4 24L4 5h20Q24 20 4 24z" fill="#a39f86" stroke="#222" stroke-width="1"/><path d="M4 5h20M4 24L24 5" stroke="#e8161c" stroke-width="1.3"/><circle cx="4" cy="5" r="1.6" fill="#e8161c"/><circle cx="24" cy="5" r="1.6" fill="#e8161c"/><circle cx="4" cy="24" r="1.6" fill="#e8161c"/></svg>
<svg class="a" style="left:3.5px;top:389.5px" width="31" height="31" viewBox="0 0 28 28"><path d="M14 2l4 5h-2.5v5h5V9.5l5 4.5-5 4.5V16h-5v5H18l-4 5-4-5h2.5v-5h-5v2.5L2 14l5.5-4.5V12h5V7H10z" fill="#e8161c" stroke="#900" stroke-width="0.5"/><rect x="11" y="11" width="6" height="6" fill="#eee" transform="rotate(45 14 14)"/></svg>
<svg class="a" style="left:38.5px;top:389.5px" width="31" height="31" viewBox="0 0 28 28"><path d="M2 18l12-7 12 5-12 7z" fill="#a9a48a" stroke="#222"/><path d="M2 18l12 5v3l-12-5zM14 23l12-7v3l-12 7z" fill="#6c6956" stroke="#222" stroke-width="0.8"/><path d="M14 2l-5 6h3v8h4v-8h3z" fill="#e8161c" stroke="#600" stroke-width="0.6"/></svg>
<svg class="a" style="left:3.5px;top:424.5px" width="31" height="31" viewBox="0 0 28 28"><path d="M5 12Q8 4 16 5Q21 6 22 9l2-2 1 8-8-1 2.5-2Q19 9 15 8.5Q10 8.5 8.5 12z" fill="#e8161c" stroke="#700" stroke-width="0.5"/><path d="M23 16Q20 24 12 23Q7 22 6 19l-2 2-1-8 8 1-2.5 2Q9 19 13 19.5Q18 19.5 19.5 16z" fill="#e8161c" stroke="#700" stroke-width="0.5"/></svg>
<svg class="a" style="left:38.5px;top:424.5px" width="31" height="31" viewBox="0 0 28 28"><path d="M4 16Q5 6 14 5Q24 5 25 14Q25 22 18 24L8 20z" fill="#5f5b4d" stroke="#111" stroke-width="1"/><path d="M8 14Q12 8 18 10Q22 12 21 16l2-1-2 5-4-3h2Q19 13 15 13Q12 14 11 17z" fill="#e8161c" stroke="#511" stroke-width="0.5"/></svg>
<svg class="a" style="left:3.5px;top:459.5px" width="31" height="31" viewBox="0 0 28 28"><rect x="3" y="3" width="22" height="22" fill="none" stroke="#f4a0a0" stroke-width="1"/><rect x="3" y="10" width="15" height="15" fill="#a9a58c" stroke="#222" stroke-width="1"/><path d="M25 2l-1 9-3-3-6 6-3-3 6-6-3-3z" fill="#e8161c" stroke="#222" stroke-width="0.8"/></svg>
<svg class="a" style="left:38.5px;top:459.5px" width="31" height="31" viewBox="0 0 28 28"><path d="M6 8Q16 0 22 8Q26 15 22 24" fill="none" stroke="#e8161c" stroke-width="1.6"/><path d="M4 16Q8 9 15 10M7 22Q10 15 16 14" fill="none" stroke="#222" stroke-width="1.4"/><path d="M12 15l8-8-1 6-2-2-4 5z" fill="#e8161c" stroke="#222" stroke-width="0.8"/><path d="M22 4l-1 8-7-2z" fill="#e8161c" stroke="#222" stroke-width="0.8"/></svg>
<svg class="a" style="left:3.5px;top:500.5px" width="31" height="31" viewBox="0 0 28 28"><path d="M3.5 21.5l9-6.5 2.5 3-9 6z" fill="#f2e41c" stroke="#222" stroke-width="1"/><path d="M3 22.5l2.5 2.5 1.5-1-2.5-3z" fill="#111"/><rect x="9" y="3" width="15" height="14" rx="4" transform="rotate(-20 16.5 10)" fill="#222"/><ellipse cx="17" cy="10" rx="4.2" ry="5" transform="rotate(20 17 10)" fill="#f5e620"/></svg>
<svg class="a" style="left:38.5px;top:500.5px" width="31" height="31" viewBox="0 0 28 28"><path d="M7 10l12 12M17 5l6 6M5 13l6 6" stroke="#222" stroke-width="1.2"/><path d="M6 10l10-8M14 22l10-8" stroke="#222" stroke-width="0.8"/><circle cx="22" cy="9" r="1.3" fill="#2db84a"/><circle cx="10" cy="19" r="1.3" fill="#2db84a"/><text x="10" y="9" font-size="7" fill="#222" font-family="Liberation Sans">5</text></svg>
<svg class="a" style="left:3.5px;top:535.5px" width="31" height="31" viewBox="0 0 28 28"><path d="M3 22Q3 6 19 4L26 4 4 24z" fill="#e0d020" stroke="#222" stroke-width="1.2"/><path d="M8 18Q9 11 17 9" fill="none" stroke="#222" stroke-width="1"/></svg>
<svg class="a" style="left:38.5px;top:535.5px" width="31" height="31" viewBox="0 0 28 28"><rect x="11" y="3" width="15" height="12" fill="#fff" stroke="#333" stroke-width="0.9"/><text x="12.5" y="12.5" font-size="8" font-family="Liberation Serif" fill="#111">A1</text><path d="M10 12H6v10" fill="none" stroke="#222" stroke-width="0.9"/><path d="M3.5 21h5L6 25z" fill="#111"/></svg>
<svg class="a" style="left:3.5px;top:570.5px" width="31" height="31" viewBox="0 0 28 28"><path d="M14 14V3" stroke="#1a4ed8" stroke-width="2"/><path d="M14 14L24 20M14 14L24 8" stroke="#2db84a" stroke-width="1.5"/><path d="M14 14L25 21" stroke="#e8161c" stroke-width="1.5"/><path d="M14 14V25M14 14L4 8M14 14L4 20" stroke="#999" stroke-width="1" stroke-dasharray="2 1.5"/><circle cx="14" cy="14" r="1.6" fill="#111"/><path d="M11 5l3-4 3 4z" fill="#1a4ed8"/></svg>
<svg class="a" style="left:38.5px;top:570.5px" width="31" height="31" viewBox="0 0 28 28"><path d="M5 24L12 3h5l6 21h-5l-1.5-5h-6L9 24z" fill="#7f7b6a" stroke="#222" stroke-width="1"/><path d="M12 15h4l-2-7z" fill="#f0f0f0"/><path d="M9 24l3 2h4l-1-2" fill="#444"/></svg>
<svg class="a" style="left:3.5px;top:612.5px" width="31" height="31" viewBox="0 0 28 28"><path d="M14 2v24" stroke="#111" stroke-width="1.8"/><path d="M13 8Q5 8 4.5 13.5Q5 19 12 19.5" fill="none" stroke="#c8232a" stroke-width="4"/><path d="M11 15l6 4.5-6 4z" fill="#c8232a"/><path d="M15 19.5Q23 19.5 23.5 14Q23 8.5 16 8" fill="none" stroke="#3aa657" stroke-width="4"/><path d="M17 12.5l-6-4.5 6-4z" fill="#3aa657"/><path d="M14 2v24" stroke="#111" stroke-width="1.4"/></svg>
<svg class="a" style="left:38.5px;top:612.5px" width="31" height="31" viewBox="0 0 28 28"><path d="M6 24Q3 18 6 12L9 6Q10 4 12 5L13 10 14 4Q16 3 17 5L17 10 19 5Q21 4 22 6L20 12 23 9Q25 9 24 12L20 18Q17 24 12 25z" fill="#f3deb0" stroke="#b6a27a" stroke-width="0.8"/></svg>
<svg class="a" style="left:3.5px;top:647.5px" width="31" height="31" viewBox="0 0 28 28"><circle cx="17" cy="11" r="7" fill="#9cc8ef" stroke="#111" stroke-width="2"/><path d="M12 16L5 23" stroke="#111" stroke-width="3.2" stroke-linecap="round"/></svg>
<svg class="a" style="left:38.5px;top:647.5px" width="31" height="31" viewBox="0 0 28 28"><rect x="3" y="4" width="22" height="20" fill="none" stroke="#e8161c" stroke-width="1.6"/><circle cx="17" cy="11" r="6" fill="#9cc8ef" stroke="#111" stroke-width="1.8"/><path d="M12.5 15.5L5 22" stroke="#111" stroke-width="3" stroke-linecap="round"/></svg>
<svg class="a" style="left:3.5px;top:682.5px" width="31" height="31" viewBox="0 0 28 28"><circle cx="15" cy="14" r="5" fill="#9cc8ef" stroke="#111" stroke-width="1.6"/><path d="M11 18L6 23" stroke="#111" stroke-width="2.6" stroke-linecap="round"/><path d="M3 3l6 1-2 2 3 3-1 1-3-3-2 2zM25 3l-1 6-2-2-3 3-1-1 3-3-2-2zM25 25l-6-1 2-2-3-3 1-1 3 3 2-2z" fill="#e8161c"/></svg>
<svg class="a" style="left:38.5px;top:682.5px" width="31" height="31" viewBox="0 0 28 28"><path d="M4 13Q4 4 13 4Q20 4 22 10l2-1-1 7-6-2 2-1Q18 8 13 8Q8 9 8 13Q8 17 12 18z" fill="#2d7fd6" stroke="#111" stroke-width="1"/><path d="M13 15l10 10" stroke="#111" stroke-width="3" stroke-linecap="round"/></svg>
<svg class="a" style="left:3.5px;top:724.5px" width="31" height="31" viewBox="0 0 28 28"><circle cx="14" cy="5" r="2" fill="#fff" stroke="#222" stroke-width="0.9"/><path d="M11 9h6l1 9-2 1v4h-4v-4l-2-1z" fill="#fff" stroke="#222" stroke-width="0.9"/><path d="M6 27l8-4 8 4" fill="none" stroke="#e8161c" stroke-width="1.2"/></svg>
<svg class="a" style="left:38.5px;top:724.5px" width="31" height="31" viewBox="0 0 28 28"><path d="M3 15Q14 2 26 15Q14 25 3 15z" fill="#fff" stroke="#333" stroke-width="1.2"/><circle cx="14" cy="13" r="5" fill="#222"/><circle cx="12" cy="11" r="1.3" fill="#fff"/><path d="M3 10Q14 0 25 9" fill="none" stroke="#333" stroke-width="1.5"/><path d="M6 19Q14 26 22 19" fill="none" stroke="#ccc" stroke-width="1.5"/></svg>
<svg class="a" style="left:3.5px;top:760.5px" width="31" height="31" viewBox="0 0 28 28"><ellipse cx="8" cy="16" rx="4" ry="7" fill="#999"/><ellipse cx="19" cy="11" rx="4" ry="7" fill="#999"/><path d="M5 18h6M16 14h6" stroke="#eee" stroke-width="1"/></svg>
<svg class="a" style="left:38.5px;top:760.5px" width="31" height="31" viewBox="0 0 28 28"><circle cx="14" cy="14" r="6" fill="#fff" stroke="#111" stroke-width="1.2"/><path d="M3 14h22M14 8v12" stroke="#111" stroke-width="1"/><path d="M20 9l5 5-5 5" fill="none" stroke="#111" stroke-width="1.4"/><text x="11.5" y="12.5" font-size="5" fill="#111" font-family="Liberation Sans">C</text></svg>
<svg class="a" style="left:3.5px;top:794.5px" width="31" height="31" viewBox="0 0 28 28"><path d="M1.5 11.5L8 6 13 5 20 4 25 13 15.5 23 6.5 21z" fill="#9c9a86" stroke="#111" stroke-width="1.2"/><path d="M6.5 21L15.5 23 22 17 14.5 19z" fill="#3a3528"/><path d="M8 7.5L17.5 4.5 21 15 11 19z" fill="#e01920" stroke="#700" stroke-width="0.6"/><path d="M10 9.5l7-2.2M10.8 12l5.5-1.8M11.8 14.8l3-1M17.5 6l2 7" stroke="#fff" stroke-width="1.3"/></svg>
<svg class="a" style="left:38.5px;top:794.5px" width="31" height="31" viewBox="0 0 28 28"><path d="M1.5 11.5L8 6 14 4 20 5 25 13 15.5 23 6.5 21z" fill="#f2f2f2" stroke="#111" stroke-width="1.1"/><path d="M6.5 21L15.5 23 22 17 14.5 19z" fill="#5a5040"/><path d="M5 12Q6 8 14 7.5Q22 8 23 12L14 19z" fill="#e0101a" stroke="#600" stroke-width="0.6"/><path d="M6 11.5Q14 9 22 11.5" stroke="#f88" stroke-width="1.2" fill="none"/><circle cx="18" cy="11" r="1" fill="#ffd"/></svg>
<svg class="a" style="left:78.5px;top:132.5px" width="27" height="27" viewBox="0 0 28 28"><path d="M11 5l12-3 1 16-12 3z" fill="#fff" stroke="#222" stroke-width="1.2"/><path d="M3 18l8-3v6z" fill="#666"/><circle cx="21" cy="5" r="1.4" fill="#e8161c"/><circle cx="12" cy="21" r="1.4" fill="#e8161c"/><circle cx="14" cy="24" r="1.8" fill="#222"/></svg>
<svg class="a" style="left:78.5px;top:168.5px" width="27" height="27" viewBox="0 0 28 28"><path d="M4 21Q7 14 10 15Q13 14 15 10Q18 8 22 9l3 0" fill="none" stroke="#e8161c" stroke-width="1.2"/><circle cx="4" cy="21" r="2.2" fill="#e8161c"/><circle cx="10" cy="15" r="2.2" fill="#e8161c"/><circle cx="16" cy="10" r="2.2" fill="#e8161c"/><circle cx="24" cy="9" r="2.2" fill="#e8161c"/></svg>
<svg class="a" style="left:78.5px;top:203.5px" width="27" height="27" viewBox="0 0 28 28"><path d="M6 12l8-6 8 4-2 10-8 2-6-4z" fill="#fff" stroke="#222" stroke-width="1"/><path d="M14 14l10 2-6 6-6-4z" fill="#f03010" stroke="#822" stroke-width="0.8"/><path d="M3 14l5 2-1 2z" fill="#444"/></svg>
<svg class="a" style="left:78.5px;top:239.5px" width="27" height="27" viewBox="0 0 28 28"><path d="M8 5l8 9M3 24L25 8" stroke="#222" stroke-width="1.2"/><path d="M7 4l8 10" stroke="#e8161c" stroke-width="1.4"/><circle cx="15" cy="14" r="2.5" fill="#fff" stroke="#222" stroke-width="1"/><circle cx="15" cy="16" r="1.5" fill="#e8161c"/></svg>
<svg class="a" style="left:78.5px;top:274.5px" width="27" height="27" viewBox="0 0 28 28"><path d="M7 10l5-5 9 2 3 9-6 5-8-2z" fill="#fff" stroke="#222" stroke-width="1.1"/><path d="M4 13l2-6 6-3 10 3" fill="none" stroke="#222" stroke-width="1" stroke-dasharray="2 1.5"/><path d="M3 18l6 2v4z" fill="#555"/></svg>
<svg class="a" style="left:78.5px;top:308.5px" width="27" height="27" viewBox="0 0 28 28"><path d="M4 10l5-4 7 2 9-1v7l-5 6-8-4-6 3z" fill="#fff" stroke="#222" stroke-width="1.1"/><path d="M9 6v10M16 8l0 5" stroke="#222" stroke-width="0.8"/></svg>
<svg class="a" style="left:78.5px;top:343.5px" width="27" height="27" viewBox="0 0 28 28"><path d="M4 8Q14 4 20 12Q24 18 22 24" fill="none" stroke="#222" stroke-width="4.5"/><path d="M4 8Q14 4 20 12Q24 18 22 24" fill="none" stroke="#eee" stroke-width="3"/><path d="M8 7Q15 6 19 12" fill="none" stroke="#c03070" stroke-width="1"/><path d="M3 11l4 1" stroke="#777" stroke-width="1.5"/></svg>
<svg class="a" style="left:78.5px;top:378.5px" width="27" height="27" viewBox="0 0 28 28"><path d="M4 16l6-6h9l5 6-10 6z" fill="#fff" stroke="#222" stroke-width="1.1"/><path d="M10 10v6M19 10v6M4 16h20" stroke="#222" stroke-width="0.8"/><path d="M7 10l3-4h9l3 4" fill="none" stroke="#e8161c" stroke-width="1.1"/></svg>
<svg class="a" style="left:78.5px;top:414.5px" width="27" height="27" viewBox="0 0 28 28"><circle cx="15" cy="13" r="8" fill="#fff" stroke="#222" stroke-width="1.2"/><path d="M9 8Q15 3 21 8" fill="#8aa6d8" stroke="none"/><path d="M15 6v14" stroke="#e8161c" stroke-width="1.6"/><path d="M3 14l5-1v8z" fill="#555"/><path d="M8 21l4 3" stroke="#222"/></svg>
<svg class="a" style="left:78.5px;top:448.5px" width="27" height="27" viewBox="0 0 28 28"><path d="M5 10l7-5 10 3 3 8-7 8-13-4z" fill="#fff" stroke="#222" stroke-width="1.1"/><path d="M12 5l2 11 11 0M14 16l-9 4" stroke="#222" stroke-width="0.8"/><path d="M22 12l4 5-4 1z" fill="#222"/><circle cx="14" cy="15" r="1.4" fill="#e8161c"/></svg>
<svg class="a" style="left:78.5px;top:484.5px" width="27" height="27" viewBox="0 0 28 28"><path d="M7 5v20" stroke="#222" stroke-width="1.4"/><path d="M12 4h13" stroke="#222" stroke-width="1.6"/><path d="M7 14Q8 5 15 4" fill="none" stroke="#e8161c" stroke-width="1.5"/></svg>
<svg class="a" style="left:78.5px;top:519.5px" width="27" height="27" viewBox="0 0 28 28"><path d="M6 6v18" stroke="#222" stroke-width="1.4"/><path d="M6 5h18" stroke="#777" stroke-width="1.3"/><path d="M6 14L15 5" stroke="#e8161c" stroke-width="1.5"/></svg>
<svg class="a" style="left:78.5px;top:554.5px" width="27" height="27" viewBox="0 0 28 28"><path d="M4 18L25 4M4 18h20" stroke="#222" stroke-width="1.4"/><path d="M4 18L17 10M4 18h12" stroke="#e8161c" stroke-width="1.5"/><circle cx="7" cy="18" r="2" fill="#822"/></svg>
<svg class="a" style="left:78.5px;top:589.5px" width="27" height="27" viewBox="0 0 28 28"><path d="M6 14l7-7h12v16H13z" fill="#fff" stroke="#222" stroke-width="1.2"/><path d="M4 16l8 7h13" fill="none" stroke="#e8161c" stroke-width="2"/></svg>
<svg class="a" style="left:78.5px;top:624.5px" width="27" height="27" viewBox="0 0 28 28"><path d="M5 10l5-5h13v16l-3 3H5z" fill="#fff" stroke="#222" stroke-width="1.2"/><path d="M5 10h15v14M20 10l3-5" stroke="#222" stroke-width="1"/><path d="M5 17h20" stroke="#e8161c" stroke-width="1.2"/><path d="M9 13v8M14 13v8" stroke="#222"/></svg>
<svg class="a" style="left:78.5px;top:659.5px" width="27" height="27" viewBox="0 0 28 28"><path d="M15 3l10 12-12 8-8-5z" fill="#fff" stroke="#555" stroke-width="1"/><path d="M15 3Q10 12 5 18" fill="none" stroke="#c03040" stroke-width="1.2"/><path d="M15 3Q14 14 13 23" fill="none" stroke="#1a3ad8" stroke-width="1.2"/><path d="M5 18l8 5 3 2" stroke="#555"/></svg>
<svg class="a" style="left:78.5px;top:692.5px" width="27" height="27" viewBox="0 0 28 28"><rect x="6" y="8" width="5" height="14" fill="#fff" stroke="#333" stroke-width="1"/><rect x="13" y="5" width="5" height="15" fill="#fff" stroke="#333" stroke-width="1"/><rect x="20" y="3" width="4" height="15" fill="#fff" stroke="#333" stroke-width="1"/><path d="M3 20l4 4" stroke="#555"/></svg>
<svg class="a" style="left:78.5px;top:728.5px" width="27" height="27" viewBox="0 0 28 28"><rect x="4" y="8" width="4" height="13" fill="#fff" stroke="#333" stroke-width="0.9"/><rect x="9" y="5" width="4" height="17" fill="#fff" stroke="#333" stroke-width="0.9"/><rect x="14" y="4" width="4" height="17" fill="#fff" stroke="#333" stroke-width="0.9"/><rect x="19" y="7" width="4" height="14" fill="#fff" stroke="#333" stroke-width="0.9"/><path d="M6 21v4M16 21v4" stroke="#333"/></svg>
<svg class="a" style="left:78.5px;top:764.0px" width="27" height="27" viewBox="0 0 28 28"><ellipse cx="15" cy="20" rx="10" ry="4" fill="#fff" stroke="#222" stroke-width="1.1"/><path d="M5 11Q15 3 25 11v9H5z" fill="#fff" stroke="#222" stroke-width="1"/><path d="M8 8v10M11 6v12M14 5v13M17 5v13M20 6v12M23 8v10" stroke="#222" stroke-width="1"/><path d="M3 14h3M3 17h3" stroke="#444"/></svg>
<svg class="a" style="left:78.5px;top:799.0px" width="27" height="27" viewBox="0 0 28 28"><path d="M10 10q4-2 7 0t7-3v14q-3 3-7 3t-7-1z" fill="#fff" stroke="#222" stroke-width="1.2"/><path d="M3 17l7-7v14z" fill="#888"/></svg>
<!--/ICONS-->
<!-- TRAY -->
<div class="a" style="left:1331px;top:122px;width:3px;height:710px;background:#f0f0f0"></div>
<div class="a" style="left:1334px;top:122px;width:266px;height:22px;background:linear-gradient(#c4d3e2,#d8e3ef)"></div>
<div class="t" style="left:1338px;top:128px;font-size:11.3px;color:#1c2a44">Default Tray</div>
<svg class="a" style="left:1572px;top:127px" width="10" height="10"><path d="M2 1h5v5h1v1h-3v3h-1v-3h-3v-1h1z" fill="#111"/><rect x="3" y="2" width="2" height="4" fill="#c8d6e6"/></svg>
<div class="a" style="left:1587px;top:128px;width:10px;height:10px;background:#d33a3a"></div>
<svg class="a" style="left:1587px;top:128px" width="10" height="10"><path d="M2.5 2.5l5 5M7.5 2.5l-5 5" stroke="#fff" stroke-width="1.8"/></svg>
<div class="hdr" style="top:146px"><div class="tri"></div><div class="lbl">Entity Info</div><div class="x">&#215;</div></div>
<div class="hdr" style="top:166px"><div class="tri"></div><div class="lbl">Materials</div><div class="x">&#215;</div></div>
<div class="hdr" style="top:186px"><div class="tri d"></div><div class="lbl">Components</div><div class="x">&#215;</div></div>
<!-- components body -->
<div class="a" style="left:1334px;top:205px;width:266px;height:350px;background:#f0f0f0"></div>
<div class="a" style="left:1336px;top:207px;width:64px;height:72px;background:#fff;border:1px solid #a9a9a9"></div>
<span id="cthumb"></span><svg class="a" style="left:1341px;top:229px" width="56" height="28" viewBox="0 0 60 32" preserveAspectRatio="none"><path d="M3 4Q1 3 1 8L1 22Q2 27 5 30H55Q58 27 59 22V8Q59 3 57 4L52 3H8z" fill="#b39a6a"/><path d="M8 3H52V30H8z" fill="#c2a878"/><rect x="9" y="6" width="42" height="8" fill="#2c2c2c"/><rect x="8" y="13" width="44" height="10" fill="#262626"/><path d="M8 6h3v8H8zM49 6h3v8h-3z" fill="#6a5a3a"/><path d="M8 3v27M52 3v27" stroke="#7a6848" stroke-width="0.8"/></svg>
<div class="a" style="left:1402px;top:207px;width:171px;height:20px;background:#fff;border:1px solid #a9a9a9"></div>
<div class="a" style="left:1402px;top:228px;width:171px;height:51px;background:#fff;border:1px solid #a9a9a9"></div>
<div class="t" style="left:1408px;top:211px;font-size:10.2px;color:#111">Kursi Sofa</div>
<div class="t" style="left:1408px;top:233px;font-size:10.4px;color:#111">Kursi Sofa Coklat</div>
<svg class="a" style="left:1582px;top:210px" width="11" height="16"><rect x="0.5" y="0.5" width="10" height="6" fill="#fff" stroke="#222"/><path d="M2 2h7l-3.5 4z" fill="#000"/><rect x="0" y="7" width="11" height="8" fill="#000"/><path d="M5.5 8.5v5M3 11h5" stroke="#fff" stroke-width="1.6"/></svg>
<div class="a" style="left:1334px;top:281px;width:266px;height:2px;background:#dcdcdc;border-top:1px solid #c9c9c9"></div>
<!-- tabs -->
<div class="a" style="left:1334px;top:289px;width:42px;height:20px;background:#fafafa;border:1px solid #e0e0e0;border-bottom:none"></div>
<div class="a" style="left:1376px;top:291px;width:38px;height:17px;background:#f0f0f0;border:1px solid #dadada;border-bottom:none"></div>
<div class="a" style="left:1414px;top:291px;width:52px;height:17px;background:#f0f0f0;border:1px solid #dadada;border-bottom:none"></div>
<div class="a" style="left:1376px;top:307px;width:224px;height:1px;background:#dadada"></div>
<div class="t" style="left:1340px;top:293px;font-size:10.4px;color:#1c2a44">Select</div>
<div class="t" style="left:1380px;top:294px;font-size:10.6px;color:#111">Edit</div>
<div class="t" style="left:1420px;top:294px;font-size:10.75px;color:#111">Statistics</div>
<!-- search row -->
<div class="a" style="left:1337px;top:309px;width:263px;height:27px;background:#f5f5f5"></div>
<div class="a" style="left:1340px;top:312px;width:25px;height:20px;background:#efefef;border:1px solid #d8d8d8"></div>
<svg class="a" style="left:1345px;top:317px" width="16" height="12"><rect x="0.5" y="0.5" width="3" height="3" fill="none" stroke="#222"/><rect x="0.5" y="6.5" width="3" height="3" fill="none" stroke="#222"/><path d="M5 1h4M5 3h3M5 7h4M5 9h3" stroke="#222"/><path d="M11 6h4l-2 2z" fill="#222"/></svg>
<div class="a" style="left:1371px;top:312px;width:22px;height:20px;background:#efefef;border:1px solid #d8d8d8"></div>
<div class="a" style="left:1393px;top:312px;width:13px;height:20px;background:#efefef;border:1px solid #d8d8d8"></div>
<svg class="a" style="left:1374px;top:314px" width="32" height="16"><path d="M2 8l7-6 7 6M4 7v8h10V7" fill="none" stroke="#000" stroke-width="1.6"/><rect x="7.5" y="10" width="3" height="5" fill="#000"/><path d="M21 5h7l-3.5 5z" fill="#000"/></svg>
<div class="a" style="left:1410px;top:312px;width:167px;height:20px;background:#fff;border:1px solid #c0c0c0"></div>
<div class="a" style="left:1560px;top:313px;width:1px;height:18px;background:#111"></div>
<div class="t" style="left:1412px;top:315px;font-size:9px;color:#9aa0aa">3D Warehouse</div>
<svg class="a" style="left:1563px;top:315px" width="13" height="14"><circle cx="8" cy="5" r="3.3" fill="none" stroke="#111" stroke-width="1.3"/><path d="M5.5 7.5L1.5 12" stroke="#111" stroke-width="1.6"/></svg>
<div class="a" style="left:1580px;top:312px;width:20px;height:20px;background:#f3f3f3"></div>
<svg class="a" style="left:1583px;top:314px" width="14" height="16"><rect x="1" y="4" width="6" height="8" fill="#fff" stroke="#222"/><rect x="1.5" y="4.5" width="5" height="2" fill="#3a7bd5"/><path d="M7 2l6 6-6 6z" fill="#111"/></svg>
<div class="a" style="left:1334px;top:336px;width:266px;height:2px;background:#dedede"></div>
<!-- list -->
<div class="a" style="left:1337px;top:338px;width:263px;height:194px;background:#fff;overflow:hidden">
 <div class="a" style="left:247px;top:0;width:16px;height:194px;background:#f0f0f0"></div>
 <div class="a" style="left:248px;top:18px;width:15px;height:16px;background:#cdcdcd"></div>
 <svg class="a" style="left:249px;top:4px" width="12" height="8"><path d="M1.5 6.5l4.5-4.5 4.5 4.5" fill="none" stroke="#333" stroke-width="1.3"/></svg>
 <svg class="a" style="left:249px;top:179px" width="12" height="8"><path d="M1.5 1.5l4.5 4.5 4.5-4.5" fill="none" stroke="#333" stroke-width="1.3"/></svg>
 <div class="a" style="left:3px;top:7px;width:67px;height:67px;border:1px solid #999"></div>
 <div class="a" style="left:3px;top:82px;width:67px;height:67px;border:1px solid #999"></div>
 <div class="a" style="left:3px;top:157px;width:67px;height:67px;border:1px solid #999"></div>
 <div class="t" style="left:73px;top:9px;font-size:9.7px;font-weight:bold;color:#000">cushion half</div>
 <div class="t" style="left:73px;top:21px;font-size:9.8px;color:#1c2a55">by <i style="color:#9aa0b0">Unknown</i></div>
 <div class="t" style="left:73px;top:33px;font-size:9.2px;color:#9aa0b0;font-style:italic">No Description</div>
 <div class="t" style="left:73px;top:84px;font-size:9.9px;font-weight:bold;color:#000">Kursi Sofa</div>
 <div class="t" style="left:73px;top:96px;font-size:9.8px;color:#1c2a55">by <i style="color:#9aa0b0">Unknown</i></div>
 <div class="t" style="left:73px;top:108px;font-size:9.9px;color:#111">Kursi Sofa Coklat</div>
 <div class="t" style="left:73px;top:159px;font-size:9.7px;font-weight:bold;color:#000">pillow</div>
 <div class="t" style="left:73px;top:171px;font-size:9.8px;color:#1c2a55">by <i style="color:#9aa0b0">Unknown</i></div>
 <div class="t" style="left:73px;top:183px;font-size:9.2px;color:#9aa0b0;font-style:italic">No Description</div>
<!--LT--><svg class="a" style="left:6px;top:96px" width="61" height="32" viewBox="0 0 60 32" preserveAspectRatio="none"><path d="M3 4Q1 3 1 8L1 22Q2 27 5 30H55Q58 27 59 22V8Q59 3 57 4L52 3H8z" fill="#b39a6a"/><path d="M8 3H52V30H8z" fill="#c2a878"/><rect x="9" y="6" width="42" height="8" fill="#2c2c2c"/><rect x="8" y="13" width="44" height="10" fill="#262626"/><path d="M8 6h3v8H8zM49 6h3v8h-3z" fill="#6a5a3a"/><path d="M8 3v27M52 3v27" stroke="#7a6848" stroke-width="0.8"/></svg><svg class="a" style="left:0;top:0" width="70" height="75"><path d="M12 12.7L26.5 9.8 57.4 47.2 55.7 61.2 36.8 69 13.8 27.5z" fill="#d9dbbd" stroke="#555" stroke-width="0.9"/><path d="M12 12.7L26.5 9.8 57.4 47.2 38 55z" fill="#e0e1c6"/><path d="M38 55L57.4 47.2 55.7 61.2 36.8 69z" fill="#eaebd6"/><path d="M12 12.7L13.8 27.5 36.8 69" fill="none" stroke="#333" stroke-width="1.2"/></svg><svg class="a" style="left:28px;top:168px" width="18" height="28"><path d="M3 2h11l2 26H1z" fill="#dcdcbc" stroke="#666" stroke-width="0.8"/></svg><!--/LT-->
 
</div>
<div class="a" style="left:1337px;top:531px;width:263px;height:1px;background:#a8a8a8"></div>
<div class="a" style="left:1337px;top:532px;width:263px;height:21px;background:#fff"></div>
<div class="a" style="left:1580px;top:532px;width:20px;height:21px;background:#f5f5f5"></div>
<svg class="a" style="left:1341px;top:535px" width="13" height="13"><path d="M1 6.5L6 1.5v3h5.5v4H6v3z" fill="#fff" stroke="#111" stroke-width="1.2"/></svg>
<svg class="a" style="left:1584px;top:535px" width="13" height="13"><path d="M12 6.5L7 1.5v3H1.5v4H7v3z" fill="#fff" stroke="#888" stroke-width="1.2"/></svg>
<div class="t" style="left:1448px;top:536px;font-size:10.7px;color:#555">In Model</div>
<div class="a" style="left:1334px;top:554px;width:266px;height:3px;background:#d8d8d8"></div>
<div class="hdr" style="top:558px"><div class="tri"></div><div class="lbl">Styles</div><div class="x">&#215;</div></div>
<div class="hdr" style="top:578px"><div class="tri"></div><div class="lbl">Layers</div><div class="x">&#215;</div></div>
<div class="hdr" style="top:598px"><div class="tri"></div><div class="lbl">Shadows</div><div class="x">&#215;</div></div>
<div class="hdr" style="top:618px"><div class="tri"></div><div class="lbl">Scenes</div><div class="x">&#215;</div></div>
<div class="hdr" style="top:638px"><div class="tri"></div><div class="lbl">Instructor</div><div class="x">&#215;</div></div>



<!-- TASKBAR -->
<svg class="a" style="left:16px;top:870px" width="19" height="19"><path d="M0 2.6L7.6 1.5v7.3H0zM8.6 1.4L18.5 0v8.8H8.6zM0 9.8h7.6v7.3L0 16zM8.6 9.8h9.9V18.5l-9.9-1.4z" fill="#fff"/></svg>
<div class="a" style="left:50px;top:859px;width:358px;height:41px;background:#f0f0f0;border-top:1px solid #c8c8c8"></div>
<svg class="a" style="left:62px;top:870px" width="20" height="20"><circle cx="12" cy="7.5" r="6" fill="none" stroke="#222" stroke-width="1.4"/><path d="M7.8 11.8L1.5 18" stroke="#222" stroke-width="1.6"/></svg>
<div class="t" style="left:92px;top:871px;font-size:15.4px;color:#222">Type here to search</div>

<!--TASKICONS-->
<svg class="a" style="left:423px;top:865px" width="28" height="28" viewBox="0 0 28 28"><path d="M5 15Q5 5 14 4Q23 4 24 14V16H10Q10 21 16 21Q20 21 23 19V24Q19 26 15 26Q5 25 5 15zM10 12H19Q19 8 14.5 8Q10.5 8 10 12z" fill="#1f8ae5"/></svg>
<svg class="a" style="left:473px;top:865px" width="28" height="28" viewBox="0 0 28 28"><path d="M3 6h8l2 2h12v4H3z" fill="#e8b430"/><rect x="3" y="10" width="22" height="14" fill="#f7cf52"/><rect x="9" y="16" width="10" height="3" fill="#2b8be0"/><rect x="11" y="19" width="6" height="5" fill="#2b8be0"/></svg>
<svg class="a" style="left:525px;top:865px" width="28" height="28" viewBox="0 0 28 28"><circle cx="14" cy="14" r="11.5" fill="#db4437"/><path d="M14 14L4 8.2A11.5 11.5 0 0 0 14 25.5z" fill="#0f9d58"/><path d="M14 14L24 8.2A11.5 11.5 0 0 1 14 25.5z" fill="#f4b400"/><path d="M14 14L4.1 8.2A11.5 11.5 0 0 1 24 8.2z" fill="#db4437"/><circle cx="14" cy="14" r="5.2" fill="#fff"/><circle cx="14" cy="14" r="4" fill="#4285f4"/></svg>
<svg class="a" style="left:577px;top:865px" width="30" height="30" viewBox="0 0 30 30"><path d="M13 3a10 10 0 0 0-8.6 15L3 23l5-1.4A10 10 0 1 0 13 3z" fill="#fff"/><circle cx="13" cy="13" r="8" fill="#3fbb4f"/><path d="M9.5 9.5q-1 2 1.5 5t5 3.5l1.3-1.5-2-1.3-1 .8q-2-1-3-3l.8-1-1.3-2z" fill="#fff"/><circle cx="20.5" cy="21" r="6.5" fill="#e3161b"/><rect x="19.5" y="16" width="2" height="6" fill="#fff"/><rect x="19.5" y="23.5" width="2" height="2" fill="#fff"/></svg>
<svg class="a" style="left:629px;top:865px" width="28" height="28" viewBox="0 0 28 28"><rect x="10" y="4" width="15" height="20" fill="#1a73c8"/><rect x="10" y="4" width="15" height="6" fill="#3fa8f0"/><rect x="17" y="10" width="8" height="7" fill="#2790e0"/><rect x="3" y="8" width="13" height="13" fill="#0f5cad"/><ellipse cx="9.5" cy="14.5" rx="3" ry="3.5" fill="none" stroke="#fff" stroke-width="1.8"/></svg>
<svg class="a" style="left:681px;top:865px" width="28" height="28" viewBox="0 0 28 28"><circle cx="14" cy="14" r="12.5" fill="#1ed760"/><path d="M7 10.5Q14 8 21.5 12M8 14.5Q14 12.5 20 15.5M8.5 18Q13.5 16.5 18.5 19" fill="none" stroke="#111" stroke-width="2" stroke-linecap="round"/></svg>
<svg class="a" style="left:732px;top:865px" width="28" height="28" viewBox="0 0 28 28"><path d="M3 7L16 3 25 7 23 21 10 25 4 20z" fill="#e2242a"/><path d="M16 3L25 7 23 21 16 17z" fill="#b81c22"/><path d="M7 11l8-3M7.5 15l7-2.5M10 19l5-2" stroke="#fff" stroke-width="2"/></svg>
<div class="a" style="left:773px;top:859px;width:51px;height:41px;background:#3b434e"></div>
<svg class="a" style="left:783px;top:865px" width="28" height="28" viewBox="0 0 28 28"><path d="M3 7L16 3 25 7 23 21 10 25 4 20z" fill="#e2242a"/><path d="M16 3L25 7 23 21 16 17z" fill="#b81c22"/><path d="M7 11l8-3M7.5 15l7-2.5M10 19l5-2" stroke="#fff" stroke-width="2"/></svg>
<svg class="a" style="left:835px;top:865px" width="28" height="28" viewBox="0 0 28 28"><path d="M4 16Q3 7 13 6Q22 6 22 13Q22 17 18 17Q15 17 16 20Q17 24 12 24Q5 24 4 16z" fill="#d8e4ee" stroke="#9ab" stroke-width="0.8"/><circle cx="9" cy="11" r="1.8" fill="#e53935"/><circle cx="13" cy="9.5" r="1.8" fill="#43a047"/><circle cx="7.5" cy="16" r="1.8" fill="#1e88e5"/><circle cx="11" cy="20" r="1.6" fill="#fdd835"/><path d="M14 17L25 4l1.5 1.5-11 13z" fill="#e0a040" stroke="#8a5a20" stroke-width="0.6"/></svg>
<div class="a" style="left:467px;top:897px;width:43px;height:3px;background:#7cb8ee"></div>
<div class="a" style="left:519px;top:897px;width:43px;height:3px;background:#7cb8ee"></div>
<div class="a" style="left:571px;top:897px;width:43px;height:3px;background:#7cb8ee"></div>
<div class="a" style="left:622px;top:897px;width:43px;height:3px;background:#7cb8ee"></div>
<div class="a" style="left:674px;top:897px;width:43px;height:3px;background:#7cb8ee"></div>
<div class="a" style="left:726px;top:897px;width:42px;height:3px;background:#7cb8ee"></div>
<div class="a" style="left:773px;top:897px;width:51px;height:3px;background:#7cb8ee"></div>
<div class="a" style="left:829px;top:897px;width:42px;height:3px;background:#7cb8ee"></div>
<!-- tray -->
<svg class="a" style="left:1308px;top:872px" width="18" height="12"><path d="M2 10l7-7 7 7" fill="none" stroke="#ddd" stroke-width="1.4"/></svg>
<svg class="a" style="left:1333px;top:872px" width="20" height="14"><rect x="3" y="3" width="13" height="8" fill="none" stroke="#ddd" stroke-width="1.2"/><rect x="16" y="5.5" width="2" height="3" fill="#ddd"/><rect x="5" y="5" width="5" height="4" fill="#ddd"/><rect x="0" y="1" width="4" height="4" fill="#ddd"/></svg>
<svg class="a" style="left:1357px;top:870px" width="22" height="18"><path d="M3 13Q0 13 1 10Q2 7 5 8Q6 3 11 4Q15 4 16 8Q19 8 19 11Q19 13 17 13z" fill="#ccd"/><path d="M15 8l6 10H9z" fill="#f7c10b"/><rect x="14.6" y="11" width="1" height="4" fill="#222"/></svg>
<svg class="a" style="left:1384px;top:870px" width="20" height="18"><path d="M2 16Q4 6 16 3M5 16Q7 9 15 7M8 16Q10 12 14 11" fill="none" stroke="#ccc" stroke-width="1.3"/><circle cx="14" cy="15" r="1.5" fill="#ddd"/></svg>
<svg class="a" style="left:1408px;top:870px" width="20" height="18"><path d="M2 7h3l5-4v12l-5-4H2z" fill="none" stroke="#ddd" stroke-width="1.2"/><path d="M12 6q2 3 0 6M14.5 4q3.5 5 0 10M17 2q5 7 0 14" fill="none" stroke="#bbb" stroke-width="1"/></svg>
<div class="t" style="left:1438px;top:873px;font-size:12.3px;color:#f0f0f0;transform:scaleX(0.85);transform-origin:left">ENG</div>
<div class="t" style="left:1495px;top:864px;font-size:12.6px;color:#f0f0f0;transform:scaleX(0.9);transform-origin:left">9:43</div>
<div class="t" style="left:1476px;top:883px;font-size:12.6px;color:#f0f0f0;transform:scaleX(0.95);transform-origin:left">19/12/2019</div>
<svg class="a" style="left:1556px;top:866px" width="30" height="30"><path d="M2 2h15v11H7l-3 3v-3H2z" fill="#fff"/><path d="M4 5h11M4 8h11M4 11h8" stroke="#1a232d" stroke-width="1"/><circle cx="17.5" cy="19" r="7.5" fill="#1a232d" stroke="#888" stroke-width="1"/><text x="11.5" y="23.5" font-size="11" font-weight="bold" fill="#fff" font-family="Liberation Sans">14</text></svg>
<div class="a" style="left:1596px;top:859px;width:1px;height:41px;background:#556"></div>
<!--/TASKICONS-->
</body></html>
